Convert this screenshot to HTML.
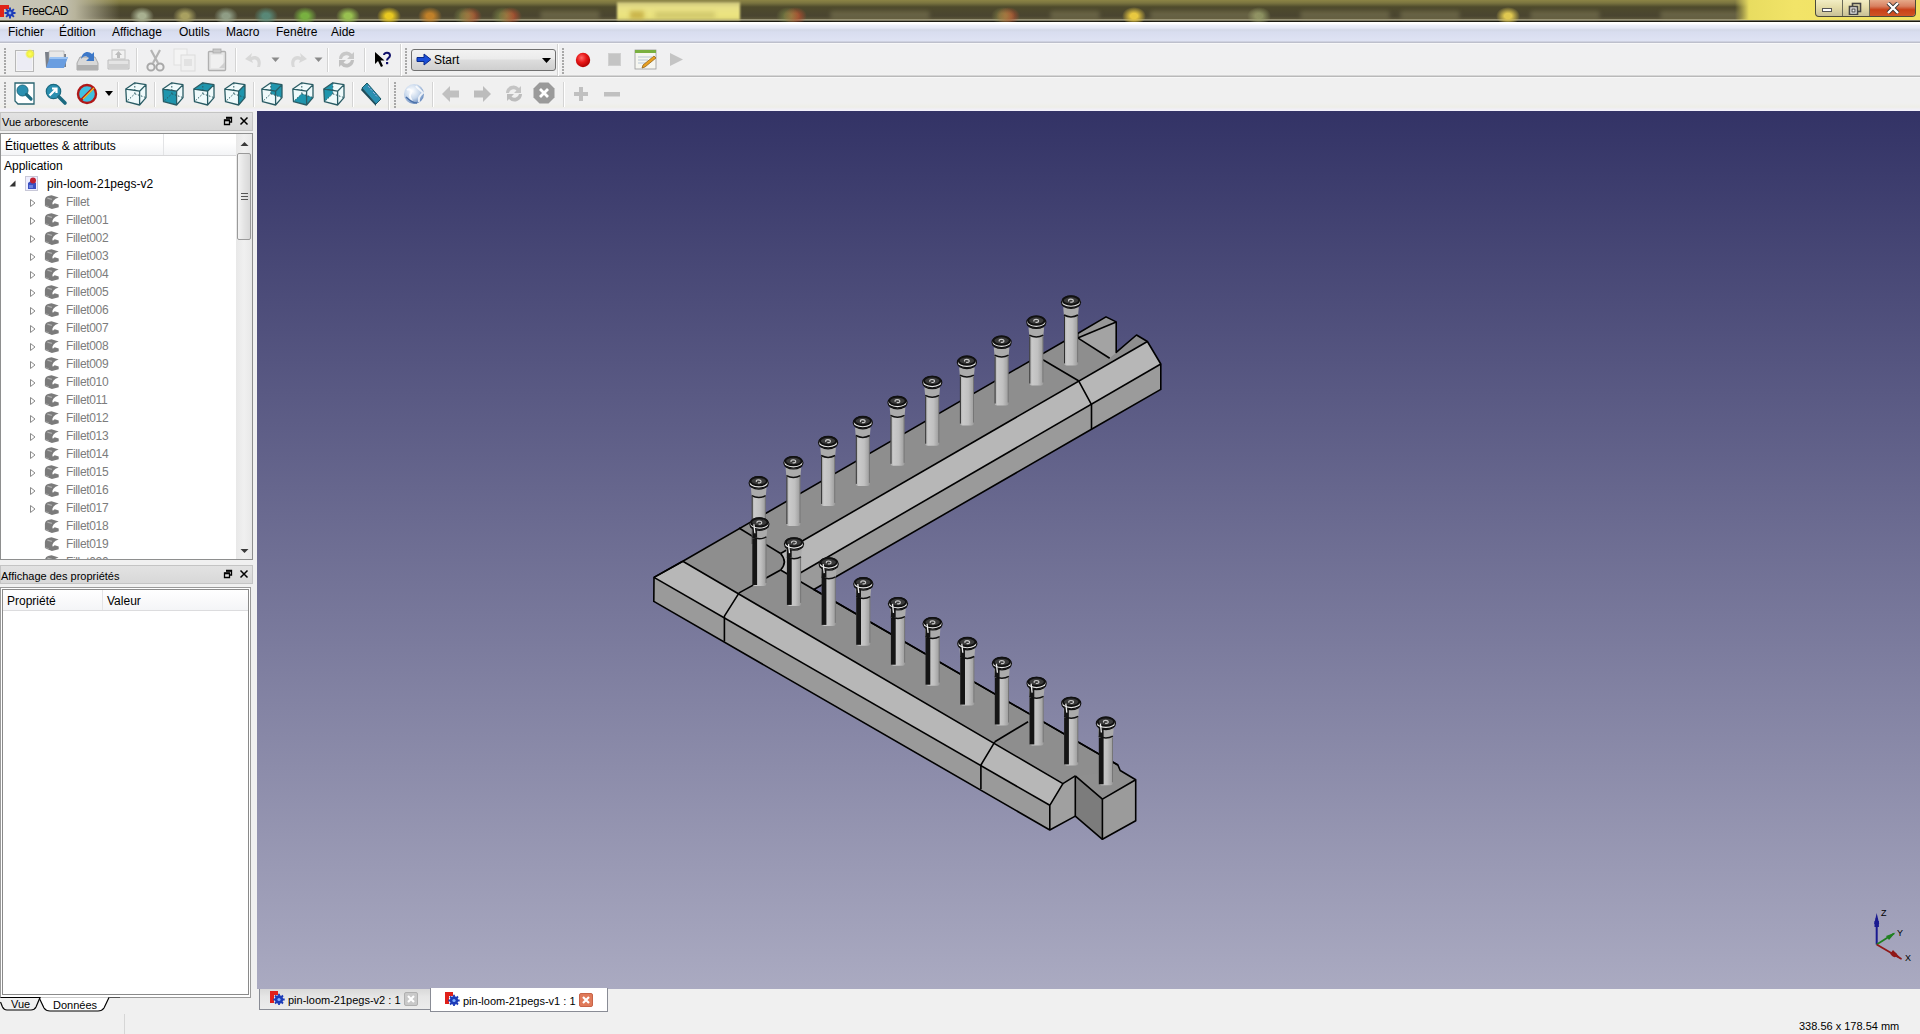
<!DOCTYPE html>
<html><head><meta charset="utf-8">
<style>
*{margin:0;padding:0;box-sizing:border-box}
html,body{width:1920px;height:1034px;overflow:hidden;background:#f0f0f0;font-family:"Liberation Sans",sans-serif;font-size:12px;color:#000;position:relative}
.a{position:absolute}
.t{position:absolute;white-space:nowrap;line-height:14px}
#title{left:0;top:0;width:1920px;height:22px;background:linear-gradient(#8c8445 0,#7a7440 3px,#4e4a2c 7px,#4a4530 16px,#5a5438 19px,#d8d4b8 20px,#1a1a10 21px)}
#menubar{left:0;top:22px;width:1920px;height:21px;background:linear-gradient(#fff 0,#fff 2px,#eef1fb 3px,#e4e8f5 6px,#d3d8e8 8px,#d8ddef 10px,#dfe3f4 19px,#bdbfcc 20px)}
#tb1{left:0;top:43px;width:1920px;height:34px;background:linear-gradient(#fff 0,#f0f0f2 1px,#f0f0f0 30px,#f2f2f2 32px,#b9b9b9 33px)}
#tb2{left:0;top:77px;width:1920px;height:34px;background:linear-gradient(#fff 0,#f0f0f0 1px,#f0f0f0 26px,#eeeee8 30px,#f2f0fa 33px)}
#view{left:257px;top:111px;width:1663px;height:878px;background:linear-gradient(#333366,#aaaac1)}
.hdr{background:linear-gradient(#e2e2e2,#d8d8d8);border:1px solid #c4c4c4}

</style></head><body>
<div id="title" class="a"></div>
<div class="a" style="left:0;top:0;width:130px;height:20px;background:linear-gradient(90deg,#c9c6b8 0,#c4c2b2 60px,#b8b49c 75px,rgba(120,115,80,0) 120px)"></div>
<div class="a" style="left:130px;top:7px;width:24px;height:18px;border-radius:50%;background:radial-gradient(closest-side,#a8b090 30%,rgba(0,0,0,0));opacity:1.00"></div>
<div class="a" style="left:173px;top:7px;width:24px;height:18px;border-radius:50%;background:radial-gradient(closest-side,#a8a060 30%,rgba(0,0,0,0));opacity:1.00"></div>
<div class="a" style="left:214px;top:7px;width:24px;height:18px;border-radius:50%;background:radial-gradient(closest-side,#98a890 30%,rgba(0,0,0,0));opacity:0.88"></div>
<div class="a" style="left:254px;top:7px;width:24px;height:18px;border-radius:50%;background:radial-gradient(closest-side,#5a9080 30%,rgba(0,0,0,0));opacity:0.88"></div>
<div class="a" style="left:293px;top:7px;width:24px;height:18px;border-radius:50%;background:radial-gradient(closest-side,#78b040 30%,rgba(0,0,0,0));opacity:1.00"></div>
<div class="a" style="left:336px;top:7px;width:24px;height:18px;border-radius:50%;background:radial-gradient(closest-side,#98c050 30%,rgba(0,0,0,0));opacity:1.00"></div>
<div class="a" style="left:377px;top:7px;width:24px;height:18px;border-radius:50%;background:radial-gradient(closest-side,#e8c820 30%,rgba(0,0,0,0));opacity:1.00"></div>
<div class="a" style="left:418px;top:7px;width:24px;height:18px;border-radius:50%;background:radial-gradient(closest-side,#d08828 30%,rgba(0,0,0,0));opacity:0.88"></div>
<div class="a" style="left:458px;top:7px;width:24px;height:18px;border-radius:50%;background:radial-gradient(closest-side,#c05030 30%,rgba(0,0,0,0));opacity:0.75"></div>
<div class="a" style="left:453px;top:7px;width:24px;height:18px;border-radius:50%;background:radial-gradient(closest-side,#90a050 30%,rgba(0,0,0,0));opacity:0.50"></div>
<div class="a" style="left:498px;top:7px;width:24px;height:18px;border-radius:50%;background:radial-gradient(closest-side,#c05030 30%,rgba(0,0,0,0));opacity:0.75"></div>
<div class="a" style="left:491px;top:7px;width:24px;height:18px;border-radius:50%;background:radial-gradient(closest-side,#90a050 30%,rgba(0,0,0,0));opacity:0.50"></div>
<div class="a" style="left:783px;top:7px;width:24px;height:18px;border-radius:50%;background:radial-gradient(closest-side,#c05030 30%,rgba(0,0,0,0));opacity:0.75"></div>
<div class="a" style="left:776px;top:7px;width:24px;height:18px;border-radius:50%;background:radial-gradient(closest-side,#90a050 30%,rgba(0,0,0,0));opacity:0.50"></div>
<div class="a" style="left:996px;top:7px;width:24px;height:18px;border-radius:50%;background:radial-gradient(closest-side,#c05030 30%,rgba(0,0,0,0));opacity:0.75"></div>
<div class="a" style="left:991px;top:7px;width:24px;height:18px;border-radius:50%;background:radial-gradient(closest-side,#a0a050 30%,rgba(0,0,0,0));opacity:0.50"></div>
<div class="a" style="left:1122px;top:7px;width:24px;height:18px;border-radius:50%;background:radial-gradient(closest-side,#e8c840 30%,rgba(0,0,0,0));opacity:1.00"></div>
<div class="a" style="left:1247px;top:7px;width:24px;height:18px;border-radius:50%;background:radial-gradient(closest-side,#a0a870 30%,rgba(0,0,0,0));opacity:0.75"></div>
<div class="a" style="left:1496px;top:7px;width:24px;height:18px;border-radius:50%;background:radial-gradient(closest-side,#e0c850 30%,rgba(0,0,0,0));opacity:1.00"></div>
<div class="a" style="left:540px;top:11px;width:60px;height:8px;border-radius:4px;background:rgba(160,155,110,0.35);filter:blur(2px)"></div>
<div class="a" style="left:830px;top:11px;width:100px;height:8px;border-radius:4px;background:rgba(160,155,110,0.35);filter:blur(2px)"></div>
<div class="a" style="left:1050px;top:11px;width:50px;height:8px;border-radius:4px;background:rgba(160,155,110,0.35);filter:blur(2px)"></div>
<div class="a" style="left:1150px;top:11px;width:110px;height:8px;border-radius:4px;background:rgba(160,155,110,0.35);filter:blur(2px)"></div>
<div class="a" style="left:1300px;top:11px;width:90px;height:8px;border-radius:4px;background:rgba(160,155,110,0.35);filter:blur(2px)"></div>
<div class="a" style="left:1400px;top:11px;width:60px;height:8px;border-radius:4px;background:rgba(160,155,110,0.35);filter:blur(2px)"></div>
<div class="a" style="left:1530px;top:11px;width:70px;height:8px;border-radius:4px;background:rgba(160,155,110,0.35);filter:blur(2px)"></div>
<div class="a" style="left:1660px;top:11px;width:80px;height:8px;border-radius:4px;background:rgba(160,155,110,0.35);filter:blur(2px)"></div>
<div class="a" style="left:617px;top:2px;width:123px;height:18px;background:linear-gradient(#c8c078,#e8e088 30%,#ece480 70%,#e0d878);filter:blur(1px)"></div>
<div class="a" style="left:630px;top:11px;width:14px;height:8px;background:rgba(180,150,40,0.6);filter:blur(2px)"></div>
<div class="a" style="left:655px;top:12px;width:60px;height:6px;background:rgba(170,160,80,0.4);filter:blur(2px)"></div>
<div class="a" style="left:1735px;top:0;width:185px;height:20px;background:linear-gradient(90deg,rgba(232,220,90,0) 0,#e8dc60 14px,#f2e468 60px,#f0e060 100%)"></div>

<svg class="a" style="left:0;top:4px" width="16" height="15" viewBox="0 0 16 15"><rect x="0" y="1" width="4" height="12" fill="#e02418"/><rect x="0" y="1" width="9" height="4" fill="#e02418"/><circle cx="10" cy="9" r="3.6" fill="#1d3cb8"/><g stroke="#1d3cb8" stroke-width="1.9"><path d="M10 3.5V14.5M4.5 9H15.5M6.1 5.1L13.9 12.9M13.9 5.1L6.1 12.9"/></g><circle cx="10" cy="9" r="1.4" fill="#8fb0e8"/></svg>
<div class="t" style="left:22px;top:4px;font-size:12px;color:#000;letter-spacing:-0.6px">FreeCAD</div>
<div class="a" style="left:1815px;top:-1px;width:101px;height:18px;border:1px solid #4a4a3a;border-top:none;border-radius:0 0 4px 4px;overflow:hidden;background:linear-gradient(#f4f0c8,#e4dca8 50%,#c8c098)"><div class="a" style="left:26px;top:0;width:1px;height:18px;background:#6a6a58"></div><div class="a" style="left:53px;top:0;width:1px;height:18px;background:#6a6a58"></div><div class="a" style="left:54px;top:0;width:47px;height:18px;background:linear-gradient(#e8b090,#d88060 40%,#c84018 60%,#d05828)"></div></div>
<div class="a" style="left:1822px;top:8px;width:10px;height:4px;background:#fff;border:1px solid #555"></div>
<svg class="a" style="left:1848px;top:2px" width="14" height="13" viewBox="0 0 14 13"><rect x="4.5" y="1.5" width="8" height="8" fill="none" stroke="#444" stroke-width="1.6"/><rect x="1.5" y="4.5" width="8" height="8" fill="#eee" stroke="#444" stroke-width="1.6"/><rect x="4" y="7" width="3" height="3" fill="none" stroke="#444"/></svg>
<svg class="a" style="left:1886px;top:2px" width="14" height="12" viewBox="0 0 14 12"><path d="M2 1 L12 11 M12 1 L2 11" stroke="#333" stroke-width="4"/><path d="M2 1 L12 11 M12 1 L2 11" stroke="#fff" stroke-width="2.4"/></svg><div id="menubar" class="a"></div>
<div class="t" style="left:8px;top:25px">Fichier</div>
<div class="t" style="left:59px;top:25px">Édition</div>
<div class="t" style="left:112px;top:25px">Affichage</div>
<div class="t" style="left:179px;top:25px">Outils</div>
<div class="t" style="left:226px;top:25px">Macro</div>
<div class="t" style="left:276px;top:25px">Fenêtre</div>
<div class="t" style="left:331px;top:25px">Aide</div>
<div id="tb1" class="a"></div><div id="tb2" class="a"></div>
<div class="a" style="left:4px;top:48px;width:2px;height:2px;background:#a8a8a8"></div><div class="a" style="left:4px;top:51px;width:2px;height:2px;background:#a8a8a8"></div><div class="a" style="left:4px;top:54px;width:2px;height:2px;background:#a8a8a8"></div><div class="a" style="left:4px;top:57px;width:2px;height:2px;background:#a8a8a8"></div><div class="a" style="left:4px;top:60px;width:2px;height:2px;background:#a8a8a8"></div><div class="a" style="left:4px;top:63px;width:2px;height:2px;background:#a8a8a8"></div><div class="a" style="left:4px;top:66px;width:2px;height:2px;background:#a8a8a8"></div><div class="a" style="left:4px;top:69px;width:2px;height:2px;background:#a8a8a8"></div><div class="a" style="left:4px;top:72px;width:2px;height:2px;background:#a8a8a8"></div>
<div class="a" style="left:4px;top:82px;width:2px;height:2px;background:#a8a8a8"></div><div class="a" style="left:4px;top:85px;width:2px;height:2px;background:#a8a8a8"></div><div class="a" style="left:4px;top:88px;width:2px;height:2px;background:#a8a8a8"></div><div class="a" style="left:4px;top:91px;width:2px;height:2px;background:#a8a8a8"></div><div class="a" style="left:4px;top:94px;width:2px;height:2px;background:#a8a8a8"></div><div class="a" style="left:4px;top:97px;width:2px;height:2px;background:#a8a8a8"></div><div class="a" style="left:4px;top:100px;width:2px;height:2px;background:#a8a8a8"></div><div class="a" style="left:4px;top:103px;width:2px;height:2px;background:#a8a8a8"></div><div class="a" style="left:4px;top:106px;width:2px;height:2px;background:#a8a8a8"></div>
<svg class="a" style="left:15px;top:49px" width="20" height="23" viewBox="0 0 20 23"><defs><radialGradient id="sun" cx="0.5" cy="0.5" r="0.5"><stop offset="0" stop-color="#ffff60"/><stop offset="0.6" stop-color="#f0f040"/><stop offset="1" stop-color="#f0f040" stop-opacity="0"/></radialGradient></defs><rect x="0.5" y="1.5" width="18" height="21" fill="#f4f4f4" stroke="#b8b8b8"/><rect x="2" y="3" width="15" height="18" fill="#ececf4"/><circle cx="15" cy="5" r="5" fill="url(#sun)"/></svg>
<svg class="a" style="left:44px;top:49px" width="25" height="20" viewBox="0 0 25 20"><path d="M1 3 L8 3 L10 5 L22 5 L22 18 L2 18Z" fill="#7a7f88"/><path d="M5 2 L20 2 L20 12 L5 12Z" fill="#e8e8e8" stroke="#aaa" stroke-width="0.6"/><path d="M2 19 L6 8 L24 8 L20 19Z" fill="#6a9ee0"/><path d="M6 8 L24 8 L23 10 L5.5 10Z" fill="#9cc4f4"/></svg>
<svg class="a" style="left:76px;top:49px" width="23" height="23" viewBox="0 0 23 23"><path d="M1 14 L4 8 L19 8 L22 14 L22 21 L1 21Z" fill="#d8d8d8" stroke="#9a9a9a" stroke-width="0.8"/><rect x="1" y="16" width="21" height="5" fill="#b0b0b0"/><path d="M5 10 C6 3 12 1 16 5 L18 3 L18 12 L10 12 L13 9 C10 6 7 7 5 10Z" fill="#3d78c8"/></svg>
<svg class="a" style="left:107px;top:49px" width="23" height="22" viewBox="0 0 23 22"><rect x="5" y="1" width="13" height="9" fill="#f2f2f2" stroke="#c4c4c4"/><path d="M11.5 2 L15 6 L13 6 L13 9 L10 9 L10 6 L8 6Z" fill="#bdbdbd"/><path d="M1 11 L22 11 L22 20 L1 20Z" fill="#e4e4e4" stroke="#bcbcbc"/><rect x="2" y="15" width="19" height="4" fill="#cfcfcf"/></svg>
<div class="a" style="left:136px;top:48px;width:1px;height:24px;background:#d4d4d4"></div><div class="a" style="left:137px;top:48px;width:1px;height:24px;background:#fff"></div>
<svg class="a" style="left:145px;top:48px" width="21" height="24" viewBox="0 0 21 24"><path d="M6 2 L13 15 M15 2 L8 15" stroke="#b4b4b4" stroke-width="2.2" fill="none"/><circle cx="6" cy="19" r="3.6" fill="none" stroke="#a8a8a8" stroke-width="2"/><circle cx="15" cy="19" r="3.6" fill="none" stroke="#a8a8a8" stroke-width="2"/></svg>
<svg class="a" style="left:173px;top:48px" width="24" height="24" viewBox="0 0 24 24"><rect x="1" y="1" width="13" height="16" fill="#f4f4f4" stroke="#e0e0e0"/><rect x="8" y="7" width="14" height="16" fill="#f0f0f0" stroke="#dcdcdc"/><rect x="11" y="11" width="8" height="7" fill="#e2e2e2"/></svg>
<svg class="a" style="left:207px;top:48px" width="21" height="24" viewBox="0 0 21 24"><rect x="1.5" y="3.5" width="17" height="19" rx="1" fill="#e6e6e6" stroke="#b0b0b0" stroke-width="1.4"/><rect x="6" y="1" width="8" height="4" fill="#c8c8c8" stroke="#aaa" stroke-width="0.8"/><rect x="4" y="7" width="12" height="13" fill="#f0f0f0"/><path d="M12 20 L18 14 L18 20Z" fill="#d0d0d0"/></svg>
<div class="a" style="left:235px;top:48px;width:1px;height:24px;background:#d4d4d4"></div><div class="a" style="left:236px;top:48px;width:1px;height:24px;background:#fff"></div>
<svg class="a" style="left:244px;top:50px" width="19" height="19" viewBox="0 0 19 19"><path d="M16 17 C19 9 13 4 7 7 L8 3 L1 9 L9 13 L8 10 C12 8 15 11 13 17Z" fill="#d8d8d8"/></svg>
<svg class="a" style="left:271px;top:57px" width="9" height="6" viewBox="0 0 9 6"><path d="M0.5 0.5 L8.5 0.5 L4.5 5Z" fill="#8a8a8a"/></svg>
<svg class="a" style="left:289px;top:50px" width="19" height="19" viewBox="0 0 19 19"><path d="M3 17 C0 9 6 4 12 7 L11 3 L18 9 L10 13 L11 10 C7 8 4 11 6 17Z" fill="#d8d8d8"/></svg>
<svg class="a" style="left:314px;top:57px" width="9" height="6" viewBox="0 0 9 6"><path d="M0.5 0.5 L8.5 0.5 L4.5 5Z" fill="#8a8a8a"/></svg>
<div class="a" style="left:327px;top:48px;width:1px;height:24px;background:#d4d4d4"></div><div class="a" style="left:328px;top:48px;width:1px;height:24px;background:#fff"></div>
<svg class="a" style="left:336px;top:49px" width="21" height="21" viewBox="0 0 21 21"><path d="M3 10 A7.5 7.5 0 0 1 16 5 L18 3 L18 10 L11 10 L13.5 7.5 A4.5 4.5 0 0 0 6 10Z" fill="#c8c8c8"/><path d="M18 11 A7.5 7.5 0 0 1 5 16 L3 18 L3 11 L10 11 L7.5 13.5 A4.5 4.5 0 0 0 15 11Z" fill="#c0c0c0"/></svg>
<div class="a" style="left:364px;top:48px;width:1px;height:24px;background:#d4d4d4"></div><div class="a" style="left:365px;top:48px;width:1px;height:24px;background:#fff"></div>
<svg class="a" style="left:374px;top:51px" width="18" height="18" viewBox="0 0 18 18"><path d="M1 1 L1 13 L4 10 L7 16 L9 15 L6.5 9.5 L10.5 9.5Z" fill="#000"/><path d="M10 4 C10 1 16 1 16 4.5 C16 7 13 7 13 9.5" fill="none" stroke="#10106a" stroke-width="2"/><rect x="12" y="11" width="2.2" height="2.2" fill="#10106a"/></svg>
<div class="a" style="left:400px;top:44px;width:1px;height:32px;background:#d4d4d4"></div><div class="a" style="left:401px;top:44px;width:1px;height:32px;background:#fff"></div>
<div class="a" style="left:405px;top:48px;width:2px;height:2px;background:#a8a8a8"></div><div class="a" style="left:405px;top:51px;width:2px;height:2px;background:#a8a8a8"></div><div class="a" style="left:405px;top:54px;width:2px;height:2px;background:#a8a8a8"></div><div class="a" style="left:405px;top:57px;width:2px;height:2px;background:#a8a8a8"></div><div class="a" style="left:405px;top:60px;width:2px;height:2px;background:#a8a8a8"></div><div class="a" style="left:405px;top:63px;width:2px;height:2px;background:#a8a8a8"></div><div class="a" style="left:405px;top:66px;width:2px;height:2px;background:#a8a8a8"></div><div class="a" style="left:405px;top:69px;width:2px;height:2px;background:#a8a8a8"></div><div class="a" style="left:405px;top:72px;width:2px;height:2px;background:#a8a8a8"></div>
<div class="a" style="left:411px;top:49px;width:145px;height:22px;border:1px solid #707070;border-radius:3px;background:linear-gradient(#f2f2f2,#ebebeb 45%,#dddddd 50%,#cfcfcf)"></div>
<svg class="a" style="left:416px;top:53px" width="16" height="13" viewBox="0 0 16 13"><path d="M1 4.5 L8 4.5 L8 1 L15 6.5 L8 12 L8 8.5 L1 8.5Z" fill="#1b4fd8" stroke="#0a2a8a" stroke-width="1"/></svg>
<div class="t" style="left:434px;top:53px">Start</div>
<svg class="a" style="left:542px;top:58px" width="9" height="5" viewBox="0 0 9 5"><path d="M0 0 L9 0 L4.5 5Z" fill="#000"/></svg>
<div class="a" style="left:557px;top:44px;width:1px;height:32px;background:#d4d4d4"></div><div class="a" style="left:558px;top:44px;width:1px;height:32px;background:#fff"></div>
<div class="a" style="left:562px;top:48px;width:2px;height:2px;background:#a8a8a8"></div><div class="a" style="left:562px;top:51px;width:2px;height:2px;background:#a8a8a8"></div><div class="a" style="left:562px;top:54px;width:2px;height:2px;background:#a8a8a8"></div><div class="a" style="left:562px;top:57px;width:2px;height:2px;background:#a8a8a8"></div><div class="a" style="left:562px;top:60px;width:2px;height:2px;background:#a8a8a8"></div><div class="a" style="left:562px;top:63px;width:2px;height:2px;background:#a8a8a8"></div><div class="a" style="left:562px;top:66px;width:2px;height:2px;background:#a8a8a8"></div><div class="a" style="left:562px;top:69px;width:2px;height:2px;background:#a8a8a8"></div><div class="a" style="left:562px;top:72px;width:2px;height:2px;background:#a8a8a8"></div>
<svg class="a" style="left:575px;top:52px" width="16" height="16" viewBox="0 0 16 16"><defs><radialGradient id="rec" cx="0.4" cy="0.35" r="0.65"><stop offset="0" stop-color="#ff6a6a"/><stop offset="0.5" stop-color="#e81818"/><stop offset="1" stop-color="#b00000"/></radialGradient></defs><circle cx="8" cy="8" r="7.2" fill="url(#rec)"/></svg>
<svg class="a" style="left:608px;top:53px" width="13" height="13" viewBox="0 0 13 13"><rect x="0.5" y="0.5" width="12" height="12" fill="#c4c4c4" stroke="#d0d0d0"/></svg>
<svg class="a" style="left:634px;top:48px" width="24" height="22" viewBox="0 0 24 22"><rect x="1" y="2" width="21" height="19" fill="#f6f6f0" stroke="#9a9a9a" stroke-width="0.8"/><rect x="1" y="2" width="21" height="3" fill="#7ab040"/><path d="M4 9H18M4 12H14M4 15H12" stroke="#b8c8d8" stroke-width="1"/><path d="M9 17 L20 8 L22 10 L11 19 L8 20Z" fill="#e8a020" stroke="#8a5a10" stroke-width="0.7"/></svg>
<svg class="a" style="left:669px;top:52px" width="15" height="15" viewBox="0 0 15 15"><path d="M1 1 L14 7.5 L1 14Z" fill="#c4c4c4"/></svg>
<svg class="a" style="left:14px;top:82px" width="22" height="24" viewBox="0 0 22 24"><path d="M1 1 L20 1 L20 22 L4 22 L1 19Z" fill="#fff" stroke="#2a6470" stroke-width="1.3"/><circle cx="8.5" cy="8.5" r="5.5" fill="#2a8fb0" stroke="#1b6a80" stroke-width="1"/><path d="M12.5 12.5 L17 17" stroke="#1b6a80" stroke-width="3.2" stroke-linecap="round"/></svg>
<svg class="a" style="left:45px;top:83px" width="23" height="23" viewBox="0 0 23 23"><circle cx="8.5" cy="8.5" r="7.2" fill="#2a8fb0" stroke="#1b6a80" stroke-width="1.2"/><path d="M4.5 12.5 L11 6 M7 5.5 L11.5 5.5 L11.5 10" stroke="#fff" stroke-width="2.2" fill="none"/><path d="M14 14 L20 20" stroke="#1b6a80" stroke-width="3.6" stroke-linecap="round"/></svg>
<svg class="a" style="left:76px;top:83px" width="23" height="22" viewBox="0 0 23 22"><circle cx="11" cy="11" r="9" fill="#40c0e0"/><circle cx="11" cy="11" r="9" fill="none" stroke="#b01818" stroke-width="2.4"/><path d="M4.5 17.5 L17.5 4.5" stroke="#b01818" stroke-width="2.4"/><path d="M7 16 L18 5" stroke="#f0c020" stroke-width="1.2"/></svg>
<svg class="a" style="left:105px;top:91px" width="8" height="5" viewBox="0 0 8 5"><path d="M0 0 L8 0 L4 5Z" fill="#000"/></svg>
<div class="a" style="left:117px;top:82px;width:1px;height:25px;background:#d4d4d4"></div><div class="a" style="left:118px;top:82px;width:1px;height:25px;background:#fff"></div>
<svg class="a" style="left:125px;top:82px" width="22" height="24" viewBox="0 0 22 24"><polygon points="0.8,7.0 9.8,0.8 21.0,2.6 21.0,15.6 14.6,23.0 1.5,19.6" fill="#effafb"/><path d="M0.8 7.0 L14.6 9.2 L14.6 23.0 L1.5 19.6 Z M14.6 9.2 L21.0 2.6 L21.0 15.6 L14.6 23.0 M0.8 7.0 L9.8 0.8 L21.0 2.6" fill="none" stroke="#2a5c64" stroke-width="1.3" stroke-linejoin="round"/><path d="M9.8 0.8 L9.8 11.8 L1.5 19.6 M9.8 11.8 L21.0 15.6" fill="none" stroke="#2a5c64" stroke-width="1" stroke-dasharray="1.6,1.6"/></svg>
<div class="a" style="left:154px;top:82px;width:1px;height:25px;background:#d4d4d4"></div><div class="a" style="left:155px;top:82px;width:1px;height:25px;background:#fff"></div>
<svg class="a" style="left:162px;top:82px" width="22" height="24" viewBox="0 0 22 24"><polygon points="0.8,7.0 9.8,0.8 21.0,2.6 21.0,15.6 14.6,23.0 1.5,19.6" fill="#effafb"/><polygon points="0.8,7.0 14.6,9.2 14.6,23.0 1.5,19.6" fill="#1f95ad"/><path d="M0.8 7.0 L14.6 9.2 L14.6 23.0 L1.5 19.6 Z M14.6 9.2 L21.0 2.6 L21.0 15.6 L14.6 23.0 M0.8 7.0 L9.8 0.8 L21.0 2.6" fill="none" stroke="#2a5c64" stroke-width="1.3" stroke-linejoin="round"/><path d="M9.8 0.8 L9.8 11.8 L1.5 19.6 M9.8 11.8 L21.0 15.6" fill="none" stroke="#2a5c64" stroke-width="1" stroke-dasharray="1.6,1.6"/></svg>
<svg class="a" style="left:193px;top:82px" width="22" height="24" viewBox="0 0 22 24"><polygon points="0.8,7.0 9.8,0.8 21.0,2.6 21.0,15.6 14.6,23.0 1.5,19.6" fill="#effafb"/><polygon points="0.8,7.0 9.8,0.8 21.0,2.6 14.6,9.2" fill="#1f95ad"/><path d="M0.8 7.0 L14.6 9.2 L14.6 23.0 L1.5 19.6 Z M14.6 9.2 L21.0 2.6 L21.0 15.6 L14.6 23.0 M0.8 7.0 L9.8 0.8 L21.0 2.6" fill="none" stroke="#2a5c64" stroke-width="1.3" stroke-linejoin="round"/><path d="M9.8 0.8 L9.8 11.8 L1.5 19.6 M9.8 11.8 L21.0 15.6" fill="none" stroke="#2a5c64" stroke-width="1" stroke-dasharray="1.6,1.6"/></svg>
<svg class="a" style="left:224px;top:82px" width="22" height="24" viewBox="0 0 22 24"><polygon points="0.8,7.0 9.8,0.8 21.0,2.6 21.0,15.6 14.6,23.0 1.5,19.6" fill="#effafb"/><polygon points="14.6,9.2 21.0,2.6 21.0,15.6 14.6,23.0" fill="#1f95ad"/><path d="M0.8 7.0 L14.6 9.2 L14.6 23.0 L1.5 19.6 Z M14.6 9.2 L21.0 2.6 L21.0 15.6 L14.6 23.0 M0.8 7.0 L9.8 0.8 L21.0 2.6" fill="none" stroke="#2a5c64" stroke-width="1.3" stroke-linejoin="round"/><path d="M9.8 0.8 L9.8 11.8 L1.5 19.6 M9.8 11.8 L21.0 15.6" fill="none" stroke="#2a5c64" stroke-width="1" stroke-dasharray="1.6,1.6"/></svg>
<div class="a" style="left:253px;top:82px;width:1px;height:25px;background:#d4d4d4"></div><div class="a" style="left:254px;top:82px;width:1px;height:25px;background:#fff"></div>
<svg class="a" style="left:261px;top:82px" width="22" height="24" viewBox="0 0 22 24"><polygon points="0.8,7.0 9.8,0.8 21.0,2.6 21.0,15.6 14.6,23.0 1.5,19.6" fill="#effafb"/><polygon points="9.8,0.8 21.0,2.6 21.0,15.6 9.8,11.8" fill="#1f95ad"/><path d="M0.8 7.0 L14.6 9.2 L14.6 23.0 L1.5 19.6 Z M14.6 9.2 L21.0 2.6 L21.0 15.6 L14.6 23.0 M0.8 7.0 L9.8 0.8 L21.0 2.6" fill="none" stroke="#2a5c64" stroke-width="1.3" stroke-linejoin="round"/><path d="M9.8 0.8 L9.8 11.8 L1.5 19.6 M9.8 11.8 L21.0 15.6" fill="none" stroke="#2a5c64" stroke-width="1" stroke-dasharray="1.6,1.6"/></svg>
<svg class="a" style="left:292px;top:82px" width="22" height="24" viewBox="0 0 22 24"><polygon points="0.8,7.0 9.8,0.8 21.0,2.6 21.0,15.6 14.6,23.0 1.5,19.6" fill="#effafb"/><polygon points="1.5,19.6 9.8,11.8 21.0,15.6 14.6,23.0" fill="#1f95ad"/><path d="M0.8 7.0 L14.6 9.2 L14.6 23.0 L1.5 19.6 Z M14.6 9.2 L21.0 2.6 L21.0 15.6 L14.6 23.0 M0.8 7.0 L9.8 0.8 L21.0 2.6" fill="none" stroke="#2a5c64" stroke-width="1.3" stroke-linejoin="round"/><path d="M9.8 0.8 L9.8 11.8 L1.5 19.6 M9.8 11.8 L21.0 15.6" fill="none" stroke="#2a5c64" stroke-width="1" stroke-dasharray="1.6,1.6"/></svg>
<svg class="a" style="left:323px;top:82px" width="22" height="24" viewBox="0 0 22 24"><polygon points="0.8,7.0 9.8,0.8 21.0,2.6 21.0,15.6 14.6,23.0 1.5,19.6" fill="#effafb"/><polygon points="0.8,7.0 9.8,0.8 9.8,11.8 1.5,19.6" fill="#1f95ad"/><path d="M0.8 7.0 L14.6 9.2 L14.6 23.0 L1.5 19.6 Z M14.6 9.2 L21.0 2.6 L21.0 15.6 L14.6 23.0 M0.8 7.0 L9.8 0.8 L21.0 2.6" fill="none" stroke="#2a5c64" stroke-width="1.3" stroke-linejoin="round"/><path d="M9.8 0.8 L9.8 11.8 L1.5 19.6 M9.8 11.8 L21.0 15.6" fill="none" stroke="#2a5c64" stroke-width="1" stroke-dasharray="1.6,1.6"/></svg>
<div class="a" style="left:352px;top:82px;width:1px;height:25px;background:#d4d4d4"></div><div class="a" style="left:353px;top:82px;width:1px;height:25px;background:#fff"></div>
<svg class="a" style="left:360px;top:82px" width="22" height="24" viewBox="0 0 22 24"><path d="M2 6 L7 1 L21 17 L16 22Z" fill="#2a8fb0" stroke="#1b5a68" stroke-width="1"/><path d="M2 6 L16 22 L16 24 L1 8Z" fill="#1b4a58"/><path d="M8 4 L10 6 M10.5 7 L12 8.5 M13 10 L15 12 M15.5 13 L17 14.5" stroke="#9ad" stroke-width="1"/></svg>
<div class="a" style="left:388px;top:78px;width:1px;height:32px;background:#d4d4d4"></div><div class="a" style="left:389px;top:78px;width:1px;height:32px;background:#fff"></div>
<div class="a" style="left:394px;top:82px;width:2px;height:2px;background:#a8a8a8"></div><div class="a" style="left:394px;top:85px;width:2px;height:2px;background:#a8a8a8"></div><div class="a" style="left:394px;top:88px;width:2px;height:2px;background:#a8a8a8"></div><div class="a" style="left:394px;top:91px;width:2px;height:2px;background:#a8a8a8"></div><div class="a" style="left:394px;top:94px;width:2px;height:2px;background:#a8a8a8"></div><div class="a" style="left:394px;top:97px;width:2px;height:2px;background:#a8a8a8"></div><div class="a" style="left:394px;top:100px;width:2px;height:2px;background:#a8a8a8"></div><div class="a" style="left:394px;top:103px;width:2px;height:2px;background:#a8a8a8"></div><div class="a" style="left:394px;top:106px;width:2px;height:2px;background:#a8a8a8"></div>
<svg class="a" style="left:403px;top:83px" width="22" height="22" viewBox="0 0 22 22"><defs><radialGradient id="glb" cx="0.4" cy="0.35" r="0.7"><stop offset="0" stop-color="#ffffff"/><stop offset="0.55" stop-color="#c8d8ec"/><stop offset="1" stop-color="#5a80b8"/></radialGradient></defs><circle cx="11" cy="11" r="10" fill="url(#glb)"/><path d="M4 7 C7 5 9 8 8 10 C6 12 7 15 9 18 M13 3 C15 6 18 7 20 10 C17 12 15 14 16 19" stroke="#fff" stroke-width="2" fill="none" opacity="0.8"/><path d="M3 14 C6 17 9 20 14 20" stroke="#4a70a8" stroke-width="1.5" fill="none"/></svg>
<div class="a" style="left:432px;top:82px;width:1px;height:25px;background:#d4d4d4"></div><div class="a" style="left:433px;top:82px;width:1px;height:25px;background:#fff"></div>
<svg class="a" style="left:441px;top:85px" width="19" height="18" viewBox="0 0 19 18"><path d="M1 9 L9 1 L9 5.5 L18 5.5 L18 12.5 L9 12.5 L9 17Z" fill="#c0c0c0"/></svg>
<svg class="a" style="left:473px;top:85px" width="19" height="18" viewBox="0 0 19 18"><path d="M18 9 L10 1 L10 5.5 L1 5.5 L1 12.5 L10 12.5 L10 17Z" fill="#bcbcbc"/></svg>
<svg class="a" style="left:504px;top:83px" width="20" height="21" viewBox="0 0 20 21"><path d="M2 10 A7.5 7.5 0 0 1 15 5 L17 3 L17 10 L10 10 L12.5 7.5 A4.5 4.5 0 0 0 5 10Z" fill="#c4c4c4"/><path d="M18 11 A7.5 7.5 0 0 1 5 16 L3 18 L3 11 L10 11 L7.5 13.5 A4.5 4.5 0 0 0 15 11Z" fill="#bcbcbc"/></svg>
<svg class="a" style="left:533px;top:82px" width="22" height="22" viewBox="0 0 22 22"><path d="M6.5 0.5 L15.5 0.5 L21.5 6.5 L21.5 15.5 L15.5 21.5 L6.5 21.5 L0.5 15.5 L0.5 6.5Z" fill="#9a9a9a"/><path d="M7 7 L15 15 M15 7 L7 15" stroke="#fff" stroke-width="2.8"/></svg>
<div class="a" style="left:563px;top:82px;width:1px;height:25px;background:#d4d4d4"></div><div class="a" style="left:564px;top:82px;width:1px;height:25px;background:#fff"></div>
<svg class="a" style="left:574px;top:87px" width="14" height="14" viewBox="0 0 14 14"><path d="M5 0 H9 V5 H14 V9 H9 V14 H5 V9 H0 V5 H5Z" fill="#c0c0c0"/></svg>
<svg class="a" style="left:604px;top:92px" width="16" height="5" viewBox="0 0 16 5"><rect x="0" y="0" width="16" height="4.5" fill="#c0c0c0"/></svg>
<!-- tree dock -->
<div class="a hdr" style="left:0;top:112px;width:253px;height:19px"></div>
<div class="t" style="left:2px;top:115px;font-size:11px">Vue arborescente</div>
<svg class="a" style="left:223px;top:116px" width="10" height="10" viewBox="0 0 10 10"><path d="M3 1.5H8.5V6H7M1.5 4H6.5V8.5H1.5Z" fill="none" stroke="#000" stroke-width="1.3"/><path d="M1.5 4.5H6.5" stroke="#000" stroke-width="1.6"/><path d="M3 2H8.5" stroke="#000" stroke-width="1.6"/></svg>
<svg class="a" style="left:239px;top:116px" width="10" height="10" viewBox="0 0 10 10"><path d="M1.5 1.5L8.5 8.5M8.5 1.5L1.5 8.5" stroke="#000" stroke-width="1.5"/></svg>
<div class="a" style="left:0;top:133px;width:253px;height:427px;border:1px solid #8e8f8f;background:#fff;overflow:hidden">
  <div class="a" style="left:0;top:0;width:235px;height:22px;background:linear-gradient(#fff 0,#fff 40%,#f3f4f6 100%);border-bottom:1px solid #d8d8da"></div>
  <div class="a" style="left:162px;top:0;width:1px;height:21px;background:#e3e4e6"></div>
  <div class="t" style="left:4px;top:5px">Étiquettes &amp; attributs</div>
  <div class="a" style="left:0;top:0;width:251px;height:425px">
  <div class="a" style="left:-1px;top:-133px;width:300px;height:1000px">
<div class="t" style="left:4px;top:156px;line-height:18px">Application</div>
<svg class="a" style="left:9px;top:179px" width="7" height="7" viewBox="0 0 7 7"><path d="M6.5 0.5 L6.5 6.5 L0.5 6.5Z" fill="#333"/></svg>
<svg class="a" style="left:25px;top:175px" width="14" height="15" viewBox="0 0 14 15"><rect x="0.5" y="0.5" width="12" height="14" fill="#eef" stroke="#c8c8d8"/><path d="M3 7 L7 4 L11 7 L11 13 L3 13Z" fill="#3a4fc0"/><circle cx="8" cy="4.5" r="3" fill="#c02030"/><rect x="4" y="9" width="4" height="3" fill="#6a80e0"/></svg>
<div class="t" style="left:47px;top:174px;line-height:18px">pin-loom-21pegs-v2</div>
<svg class="a" style="left:29px;top:197px" width="8" height="10" viewBox="0 0 8 10"><path d="M1.5 1.5 L6 5 L1.5 8.5Z" fill="none" stroke="#8a8a8a" stroke-width="1"/></svg>
<svg class="a" style="left:44px;top:192px" width="16" height="17" viewBox="0 0 16 17"><path d="M0.9 7 Q1.5 3.5 4.1 3.1 L7.5 2.3 L14.7 4.4 Q11 5.5 9.6 7.4 L8.3 9.9 L8.8 11.8 L10.7 10.3 L14.7 11.6 L14.7 14.2 L7.9 15.9 L4.1 14.4 L0.9 12.9Z" fill="#7b7b7b"/><path d="M3.4 5.2 L7.9 6.3" stroke="#b0b0b0" stroke-width="1.2"/><path d="M1.5 12.5 L5 13.8" stroke="#a0a0a0" stroke-width="1"/></svg>
<div class="t" style="left:66px;top:192px;line-height:18px;color:#7c7c7c;letter-spacing:-0.35px">Fillet</div>
<svg class="a" style="left:29px;top:215px" width="8" height="10" viewBox="0 0 8 10"><path d="M1.5 1.5 L6 5 L1.5 8.5Z" fill="none" stroke="#8a8a8a" stroke-width="1"/></svg>
<svg class="a" style="left:44px;top:210px" width="16" height="17" viewBox="0 0 16 17"><path d="M0.9 7 Q1.5 3.5 4.1 3.1 L7.5 2.3 L14.7 4.4 Q11 5.5 9.6 7.4 L8.3 9.9 L8.8 11.8 L10.7 10.3 L14.7 11.6 L14.7 14.2 L7.9 15.9 L4.1 14.4 L0.9 12.9Z" fill="#7b7b7b"/><path d="M3.4 5.2 L7.9 6.3" stroke="#b0b0b0" stroke-width="1.2"/><path d="M1.5 12.5 L5 13.8" stroke="#a0a0a0" stroke-width="1"/></svg>
<div class="t" style="left:66px;top:210px;line-height:18px;color:#7c7c7c;letter-spacing:-0.35px">Fillet001</div>
<svg class="a" style="left:29px;top:233px" width="8" height="10" viewBox="0 0 8 10"><path d="M1.5 1.5 L6 5 L1.5 8.5Z" fill="none" stroke="#8a8a8a" stroke-width="1"/></svg>
<svg class="a" style="left:44px;top:228px" width="16" height="17" viewBox="0 0 16 17"><path d="M0.9 7 Q1.5 3.5 4.1 3.1 L7.5 2.3 L14.7 4.4 Q11 5.5 9.6 7.4 L8.3 9.9 L8.8 11.8 L10.7 10.3 L14.7 11.6 L14.7 14.2 L7.9 15.9 L4.1 14.4 L0.9 12.9Z" fill="#7b7b7b"/><path d="M3.4 5.2 L7.9 6.3" stroke="#b0b0b0" stroke-width="1.2"/><path d="M1.5 12.5 L5 13.8" stroke="#a0a0a0" stroke-width="1"/></svg>
<div class="t" style="left:66px;top:228px;line-height:18px;color:#7c7c7c;letter-spacing:-0.35px">Fillet002</div>
<svg class="a" style="left:29px;top:251px" width="8" height="10" viewBox="0 0 8 10"><path d="M1.5 1.5 L6 5 L1.5 8.5Z" fill="none" stroke="#8a8a8a" stroke-width="1"/></svg>
<svg class="a" style="left:44px;top:246px" width="16" height="17" viewBox="0 0 16 17"><path d="M0.9 7 Q1.5 3.5 4.1 3.1 L7.5 2.3 L14.7 4.4 Q11 5.5 9.6 7.4 L8.3 9.9 L8.8 11.8 L10.7 10.3 L14.7 11.6 L14.7 14.2 L7.9 15.9 L4.1 14.4 L0.9 12.9Z" fill="#7b7b7b"/><path d="M3.4 5.2 L7.9 6.3" stroke="#b0b0b0" stroke-width="1.2"/><path d="M1.5 12.5 L5 13.8" stroke="#a0a0a0" stroke-width="1"/></svg>
<div class="t" style="left:66px;top:246px;line-height:18px;color:#7c7c7c;letter-spacing:-0.35px">Fillet003</div>
<svg class="a" style="left:29px;top:269px" width="8" height="10" viewBox="0 0 8 10"><path d="M1.5 1.5 L6 5 L1.5 8.5Z" fill="none" stroke="#8a8a8a" stroke-width="1"/></svg>
<svg class="a" style="left:44px;top:264px" width="16" height="17" viewBox="0 0 16 17"><path d="M0.9 7 Q1.5 3.5 4.1 3.1 L7.5 2.3 L14.7 4.4 Q11 5.5 9.6 7.4 L8.3 9.9 L8.8 11.8 L10.7 10.3 L14.7 11.6 L14.7 14.2 L7.9 15.9 L4.1 14.4 L0.9 12.9Z" fill="#7b7b7b"/><path d="M3.4 5.2 L7.9 6.3" stroke="#b0b0b0" stroke-width="1.2"/><path d="M1.5 12.5 L5 13.8" stroke="#a0a0a0" stroke-width="1"/></svg>
<div class="t" style="left:66px;top:264px;line-height:18px;color:#7c7c7c;letter-spacing:-0.35px">Fillet004</div>
<svg class="a" style="left:29px;top:287px" width="8" height="10" viewBox="0 0 8 10"><path d="M1.5 1.5 L6 5 L1.5 8.5Z" fill="none" stroke="#8a8a8a" stroke-width="1"/></svg>
<svg class="a" style="left:44px;top:282px" width="16" height="17" viewBox="0 0 16 17"><path d="M0.9 7 Q1.5 3.5 4.1 3.1 L7.5 2.3 L14.7 4.4 Q11 5.5 9.6 7.4 L8.3 9.9 L8.8 11.8 L10.7 10.3 L14.7 11.6 L14.7 14.2 L7.9 15.9 L4.1 14.4 L0.9 12.9Z" fill="#7b7b7b"/><path d="M3.4 5.2 L7.9 6.3" stroke="#b0b0b0" stroke-width="1.2"/><path d="M1.5 12.5 L5 13.8" stroke="#a0a0a0" stroke-width="1"/></svg>
<div class="t" style="left:66px;top:282px;line-height:18px;color:#7c7c7c;letter-spacing:-0.35px">Fillet005</div>
<svg class="a" style="left:29px;top:305px" width="8" height="10" viewBox="0 0 8 10"><path d="M1.5 1.5 L6 5 L1.5 8.5Z" fill="none" stroke="#8a8a8a" stroke-width="1"/></svg>
<svg class="a" style="left:44px;top:300px" width="16" height="17" viewBox="0 0 16 17"><path d="M0.9 7 Q1.5 3.5 4.1 3.1 L7.5 2.3 L14.7 4.4 Q11 5.5 9.6 7.4 L8.3 9.9 L8.8 11.8 L10.7 10.3 L14.7 11.6 L14.7 14.2 L7.9 15.9 L4.1 14.4 L0.9 12.9Z" fill="#7b7b7b"/><path d="M3.4 5.2 L7.9 6.3" stroke="#b0b0b0" stroke-width="1.2"/><path d="M1.5 12.5 L5 13.8" stroke="#a0a0a0" stroke-width="1"/></svg>
<div class="t" style="left:66px;top:300px;line-height:18px;color:#7c7c7c;letter-spacing:-0.35px">Fillet006</div>
<svg class="a" style="left:29px;top:323px" width="8" height="10" viewBox="0 0 8 10"><path d="M1.5 1.5 L6 5 L1.5 8.5Z" fill="none" stroke="#8a8a8a" stroke-width="1"/></svg>
<svg class="a" style="left:44px;top:318px" width="16" height="17" viewBox="0 0 16 17"><path d="M0.9 7 Q1.5 3.5 4.1 3.1 L7.5 2.3 L14.7 4.4 Q11 5.5 9.6 7.4 L8.3 9.9 L8.8 11.8 L10.7 10.3 L14.7 11.6 L14.7 14.2 L7.9 15.9 L4.1 14.4 L0.9 12.9Z" fill="#7b7b7b"/><path d="M3.4 5.2 L7.9 6.3" stroke="#b0b0b0" stroke-width="1.2"/><path d="M1.5 12.5 L5 13.8" stroke="#a0a0a0" stroke-width="1"/></svg>
<div class="t" style="left:66px;top:318px;line-height:18px;color:#7c7c7c;letter-spacing:-0.35px">Fillet007</div>
<svg class="a" style="left:29px;top:341px" width="8" height="10" viewBox="0 0 8 10"><path d="M1.5 1.5 L6 5 L1.5 8.5Z" fill="none" stroke="#8a8a8a" stroke-width="1"/></svg>
<svg class="a" style="left:44px;top:336px" width="16" height="17" viewBox="0 0 16 17"><path d="M0.9 7 Q1.5 3.5 4.1 3.1 L7.5 2.3 L14.7 4.4 Q11 5.5 9.6 7.4 L8.3 9.9 L8.8 11.8 L10.7 10.3 L14.7 11.6 L14.7 14.2 L7.9 15.9 L4.1 14.4 L0.9 12.9Z" fill="#7b7b7b"/><path d="M3.4 5.2 L7.9 6.3" stroke="#b0b0b0" stroke-width="1.2"/><path d="M1.5 12.5 L5 13.8" stroke="#a0a0a0" stroke-width="1"/></svg>
<div class="t" style="left:66px;top:336px;line-height:18px;color:#7c7c7c;letter-spacing:-0.35px">Fillet008</div>
<svg class="a" style="left:29px;top:359px" width="8" height="10" viewBox="0 0 8 10"><path d="M1.5 1.5 L6 5 L1.5 8.5Z" fill="none" stroke="#8a8a8a" stroke-width="1"/></svg>
<svg class="a" style="left:44px;top:354px" width="16" height="17" viewBox="0 0 16 17"><path d="M0.9 7 Q1.5 3.5 4.1 3.1 L7.5 2.3 L14.7 4.4 Q11 5.5 9.6 7.4 L8.3 9.9 L8.8 11.8 L10.7 10.3 L14.7 11.6 L14.7 14.2 L7.9 15.9 L4.1 14.4 L0.9 12.9Z" fill="#7b7b7b"/><path d="M3.4 5.2 L7.9 6.3" stroke="#b0b0b0" stroke-width="1.2"/><path d="M1.5 12.5 L5 13.8" stroke="#a0a0a0" stroke-width="1"/></svg>
<div class="t" style="left:66px;top:354px;line-height:18px;color:#7c7c7c;letter-spacing:-0.35px">Fillet009</div>
<svg class="a" style="left:29px;top:377px" width="8" height="10" viewBox="0 0 8 10"><path d="M1.5 1.5 L6 5 L1.5 8.5Z" fill="none" stroke="#8a8a8a" stroke-width="1"/></svg>
<svg class="a" style="left:44px;top:372px" width="16" height="17" viewBox="0 0 16 17"><path d="M0.9 7 Q1.5 3.5 4.1 3.1 L7.5 2.3 L14.7 4.4 Q11 5.5 9.6 7.4 L8.3 9.9 L8.8 11.8 L10.7 10.3 L14.7 11.6 L14.7 14.2 L7.9 15.9 L4.1 14.4 L0.9 12.9Z" fill="#7b7b7b"/><path d="M3.4 5.2 L7.9 6.3" stroke="#b0b0b0" stroke-width="1.2"/><path d="M1.5 12.5 L5 13.8" stroke="#a0a0a0" stroke-width="1"/></svg>
<div class="t" style="left:66px;top:372px;line-height:18px;color:#7c7c7c;letter-spacing:-0.35px">Fillet010</div>
<svg class="a" style="left:29px;top:395px" width="8" height="10" viewBox="0 0 8 10"><path d="M1.5 1.5 L6 5 L1.5 8.5Z" fill="none" stroke="#8a8a8a" stroke-width="1"/></svg>
<svg class="a" style="left:44px;top:390px" width="16" height="17" viewBox="0 0 16 17"><path d="M0.9 7 Q1.5 3.5 4.1 3.1 L7.5 2.3 L14.7 4.4 Q11 5.5 9.6 7.4 L8.3 9.9 L8.8 11.8 L10.7 10.3 L14.7 11.6 L14.7 14.2 L7.9 15.9 L4.1 14.4 L0.9 12.9Z" fill="#7b7b7b"/><path d="M3.4 5.2 L7.9 6.3" stroke="#b0b0b0" stroke-width="1.2"/><path d="M1.5 12.5 L5 13.8" stroke="#a0a0a0" stroke-width="1"/></svg>
<div class="t" style="left:66px;top:390px;line-height:18px;color:#7c7c7c;letter-spacing:-0.35px">Fillet011</div>
<svg class="a" style="left:29px;top:413px" width="8" height="10" viewBox="0 0 8 10"><path d="M1.5 1.5 L6 5 L1.5 8.5Z" fill="none" stroke="#8a8a8a" stroke-width="1"/></svg>
<svg class="a" style="left:44px;top:408px" width="16" height="17" viewBox="0 0 16 17"><path d="M0.9 7 Q1.5 3.5 4.1 3.1 L7.5 2.3 L14.7 4.4 Q11 5.5 9.6 7.4 L8.3 9.9 L8.8 11.8 L10.7 10.3 L14.7 11.6 L14.7 14.2 L7.9 15.9 L4.1 14.4 L0.9 12.9Z" fill="#7b7b7b"/><path d="M3.4 5.2 L7.9 6.3" stroke="#b0b0b0" stroke-width="1.2"/><path d="M1.5 12.5 L5 13.8" stroke="#a0a0a0" stroke-width="1"/></svg>
<div class="t" style="left:66px;top:408px;line-height:18px;color:#7c7c7c;letter-spacing:-0.35px">Fillet012</div>
<svg class="a" style="left:29px;top:431px" width="8" height="10" viewBox="0 0 8 10"><path d="M1.5 1.5 L6 5 L1.5 8.5Z" fill="none" stroke="#8a8a8a" stroke-width="1"/></svg>
<svg class="a" style="left:44px;top:426px" width="16" height="17" viewBox="0 0 16 17"><path d="M0.9 7 Q1.5 3.5 4.1 3.1 L7.5 2.3 L14.7 4.4 Q11 5.5 9.6 7.4 L8.3 9.9 L8.8 11.8 L10.7 10.3 L14.7 11.6 L14.7 14.2 L7.9 15.9 L4.1 14.4 L0.9 12.9Z" fill="#7b7b7b"/><path d="M3.4 5.2 L7.9 6.3" stroke="#b0b0b0" stroke-width="1.2"/><path d="M1.5 12.5 L5 13.8" stroke="#a0a0a0" stroke-width="1"/></svg>
<div class="t" style="left:66px;top:426px;line-height:18px;color:#7c7c7c;letter-spacing:-0.35px">Fillet013</div>
<svg class="a" style="left:29px;top:449px" width="8" height="10" viewBox="0 0 8 10"><path d="M1.5 1.5 L6 5 L1.5 8.5Z" fill="none" stroke="#8a8a8a" stroke-width="1"/></svg>
<svg class="a" style="left:44px;top:444px" width="16" height="17" viewBox="0 0 16 17"><path d="M0.9 7 Q1.5 3.5 4.1 3.1 L7.5 2.3 L14.7 4.4 Q11 5.5 9.6 7.4 L8.3 9.9 L8.8 11.8 L10.7 10.3 L14.7 11.6 L14.7 14.2 L7.9 15.9 L4.1 14.4 L0.9 12.9Z" fill="#7b7b7b"/><path d="M3.4 5.2 L7.9 6.3" stroke="#b0b0b0" stroke-width="1.2"/><path d="M1.5 12.5 L5 13.8" stroke="#a0a0a0" stroke-width="1"/></svg>
<div class="t" style="left:66px;top:444px;line-height:18px;color:#7c7c7c;letter-spacing:-0.35px">Fillet014</div>
<svg class="a" style="left:29px;top:467px" width="8" height="10" viewBox="0 0 8 10"><path d="M1.5 1.5 L6 5 L1.5 8.5Z" fill="none" stroke="#8a8a8a" stroke-width="1"/></svg>
<svg class="a" style="left:44px;top:462px" width="16" height="17" viewBox="0 0 16 17"><path d="M0.9 7 Q1.5 3.5 4.1 3.1 L7.5 2.3 L14.7 4.4 Q11 5.5 9.6 7.4 L8.3 9.9 L8.8 11.8 L10.7 10.3 L14.7 11.6 L14.7 14.2 L7.9 15.9 L4.1 14.4 L0.9 12.9Z" fill="#7b7b7b"/><path d="M3.4 5.2 L7.9 6.3" stroke="#b0b0b0" stroke-width="1.2"/><path d="M1.5 12.5 L5 13.8" stroke="#a0a0a0" stroke-width="1"/></svg>
<div class="t" style="left:66px;top:462px;line-height:18px;color:#7c7c7c;letter-spacing:-0.35px">Fillet015</div>
<svg class="a" style="left:29px;top:485px" width="8" height="10" viewBox="0 0 8 10"><path d="M1.5 1.5 L6 5 L1.5 8.5Z" fill="none" stroke="#8a8a8a" stroke-width="1"/></svg>
<svg class="a" style="left:44px;top:480px" width="16" height="17" viewBox="0 0 16 17"><path d="M0.9 7 Q1.5 3.5 4.1 3.1 L7.5 2.3 L14.7 4.4 Q11 5.5 9.6 7.4 L8.3 9.9 L8.8 11.8 L10.7 10.3 L14.7 11.6 L14.7 14.2 L7.9 15.9 L4.1 14.4 L0.9 12.9Z" fill="#7b7b7b"/><path d="M3.4 5.2 L7.9 6.3" stroke="#b0b0b0" stroke-width="1.2"/><path d="M1.5 12.5 L5 13.8" stroke="#a0a0a0" stroke-width="1"/></svg>
<div class="t" style="left:66px;top:480px;line-height:18px;color:#7c7c7c;letter-spacing:-0.35px">Fillet016</div>
<svg class="a" style="left:29px;top:503px" width="8" height="10" viewBox="0 0 8 10"><path d="M1.5 1.5 L6 5 L1.5 8.5Z" fill="none" stroke="#8a8a8a" stroke-width="1"/></svg>
<svg class="a" style="left:44px;top:498px" width="16" height="17" viewBox="0 0 16 17"><path d="M0.9 7 Q1.5 3.5 4.1 3.1 L7.5 2.3 L14.7 4.4 Q11 5.5 9.6 7.4 L8.3 9.9 L8.8 11.8 L10.7 10.3 L14.7 11.6 L14.7 14.2 L7.9 15.9 L4.1 14.4 L0.9 12.9Z" fill="#7b7b7b"/><path d="M3.4 5.2 L7.9 6.3" stroke="#b0b0b0" stroke-width="1.2"/><path d="M1.5 12.5 L5 13.8" stroke="#a0a0a0" stroke-width="1"/></svg>
<div class="t" style="left:66px;top:498px;line-height:18px;color:#7c7c7c;letter-spacing:-0.35px">Fillet017</div>
<svg class="a" style="left:44px;top:516px" width="16" height="17" viewBox="0 0 16 17"><path d="M0.9 7 Q1.5 3.5 4.1 3.1 L7.5 2.3 L14.7 4.4 Q11 5.5 9.6 7.4 L8.3 9.9 L8.8 11.8 L10.7 10.3 L14.7 11.6 L14.7 14.2 L7.9 15.9 L4.1 14.4 L0.9 12.9Z" fill="#7b7b7b"/><path d="M3.4 5.2 L7.9 6.3" stroke="#b0b0b0" stroke-width="1.2"/><path d="M1.5 12.5 L5 13.8" stroke="#a0a0a0" stroke-width="1"/></svg>
<div class="t" style="left:66px;top:516px;line-height:18px;color:#7c7c7c;letter-spacing:-0.35px">Fillet018</div>
<svg class="a" style="left:44px;top:534px" width="16" height="17" viewBox="0 0 16 17"><path d="M0.9 7 Q1.5 3.5 4.1 3.1 L7.5 2.3 L14.7 4.4 Q11 5.5 9.6 7.4 L8.3 9.9 L8.8 11.8 L10.7 10.3 L14.7 11.6 L14.7 14.2 L7.9 15.9 L4.1 14.4 L0.9 12.9Z" fill="#7b7b7b"/><path d="M3.4 5.2 L7.9 6.3" stroke="#b0b0b0" stroke-width="1.2"/><path d="M1.5 12.5 L5 13.8" stroke="#a0a0a0" stroke-width="1"/></svg>
<div class="t" style="left:66px;top:534px;line-height:18px;color:#7c7c7c;letter-spacing:-0.35px">Fillet019</div>
<svg class="a" style="left:29px;top:557px" width="8" height="10" viewBox="0 0 8 10"><path d="M1.5 1.5 L6 5 L1.5 8.5Z" fill="none" stroke="#8a8a8a" stroke-width="1"/></svg>
<svg class="a" style="left:44px;top:552px" width="16" height="17" viewBox="0 0 16 17"><path d="M0.9 7 Q1.5 3.5 4.1 3.1 L7.5 2.3 L14.7 4.4 Q11 5.5 9.6 7.4 L8.3 9.9 L8.8 11.8 L10.7 10.3 L14.7 11.6 L14.7 14.2 L7.9 15.9 L4.1 14.4 L0.9 12.9Z" fill="#7b7b7b"/><path d="M3.4 5.2 L7.9 6.3" stroke="#b0b0b0" stroke-width="1.2"/><path d="M1.5 12.5 L5 13.8" stroke="#a0a0a0" stroke-width="1"/></svg>
<div class="t" style="left:66px;top:552px;line-height:18px;color:#7c7c7c;letter-spacing:-0.35px">Fillet020</div>
  </div></div>
  <div class="a" style="left:235px;top:0;width:16px;height:425px;background:linear-gradient(90deg,#e8e8e8,#f0f0f0 50%,#e8e8e8)"></div>
  <svg class="a" style="left:239px;top:7px" width="9" height="6" viewBox="0 0 9 6"><path d="M0.5 5L4.5 1L8.5 5Z" fill="#3a3a3a"/></svg>
  <div class="a" style="left:236px;top:19px;width:14px;height:87px;border:1px solid #9a9a9a;border-radius:2px;background:linear-gradient(90deg,#f4f4f4,#e4e4e4 50%,#d8d8d8)"></div>
  <div class="a" style="left:240px;top:59px;width:7px;height:1px;background:#555"></div>
  <div class="a" style="left:240px;top:62px;width:7px;height:1px;background:#555"></div>
  <div class="a" style="left:240px;top:65px;width:7px;height:1px;background:#555"></div>
  <svg class="a" style="left:239px;top:414px" width="9" height="6" viewBox="0 0 9 6"><path d="M0.5 1L4.5 5L8.5 1Z" fill="#3a3a3a"/></svg>
</div>
<!-- property dock -->
<div class="a hdr" style="left:0;top:565px;width:253px;height:19px"></div>
<div class="t" style="left:1px;top:569px;font-size:11px">Affichage des propriétés</div>
<svg class="a" style="left:223px;top:569px" width="10" height="10" viewBox="0 0 10 10"><path d="M3 1.5H8.5V6H7M1.5 4H6.5V8.5H1.5Z" fill="none" stroke="#000" stroke-width="1.3"/><path d="M1.5 4.5H6.5" stroke="#000" stroke-width="1.6"/><path d="M3 2H8.5" stroke="#000" stroke-width="1.6"/></svg>
<svg class="a" style="left:239px;top:569px" width="10" height="10" viewBox="0 0 10 10"><path d="M1.5 1.5L8.5 8.5M8.5 1.5L1.5 8.5" stroke="#000" stroke-width="1.5"/></svg>
<div class="a" style="left:0;top:587px;width:251px;height:411px;border:1px solid #9a9a9a;background:#fff"></div>
<div class="a" style="left:2px;top:589px;width:247px;height:406px;border:1px solid #8a8a8a;background:#fff"></div>
<div class="a" style="left:3px;top:590px;width:245px;height:21px;background:linear-gradient(#fff,#f4f5f7);border-bottom:1px solid #dcdcde"></div>
<div class="a" style="left:102px;top:590px;width:1px;height:20px;background:#e4e4e6"></div>
<div class="t" style="left:7px;top:594px">Propriété</div>
<div class="t" style="left:107px;top:594px">Valeur</div>
<!-- bottom tabs Vue / Donnees -->
<svg class="a" style="left:0;top:995px" width="120" height="18" viewBox="0 0 120 18">
<path d="M109 2.5 L104 13 Q102 16 98 16 L50 16 Q46 16 44 13 L39 2.5" fill="#fff" stroke="#000" stroke-width="1.2"/>
<path d="M0.5 2.5 L40 2.5 L36 12 Q34.5 15 31 15 L7 15 Q4 15 2.5 12 L0.5 7" fill="#f0f0f0" stroke="#000" stroke-width="1.2"/>
<path d="M108 2.5 L120 2.5" stroke="#555" stroke-width="1"/>
</svg>
<div class="t" style="left:11px;top:997px;font-size:11px">Vue</div>
<div class="t" style="left:53px;top:998px;font-size:11px">Données</div>
<div id="view" class="a"></div>

<svg class="a" style="left:1860px;top:900px" width="60" height="70" viewBox="1860 900 60 70">
<path d="M1876.7 944.5 L1876.7 918" stroke="#1a1a90" stroke-width="2"/><path d="M1876.7 913 L1879.2 924 L1874.2 924Z" fill="#1a1a90"/><rect x="1874.5" y="921" width="4.4" height="6" fill="#1a1a90"/>
<path d="M1876.7 944.5 L1894 933.5" stroke="#208020" stroke-width="1.8"/><path d="M1895.5 932.5 L1886 936 L1889 940Z" fill="#208020"/>
<path d="M1876.7 944.5 L1901.5 959" stroke="#901818" stroke-width="1.8"/><path d="M1902 959.5 L1890 954 L1893 950Z" fill="#901818"/><ellipse cx="1894" cy="954.5" rx="3" ry="2.3" fill="#901818" transform="rotate(30 1894 954.5)"/>
<text x="1881" y="916" font-family="Liberation Sans" font-size="9" fill="#000">Z</text>
<text x="1897" y="936" font-family="Liberation Sans" font-size="9" fill="#000">Y</text>
<text x="1905" y="961" font-family="Liberation Sans" font-size="9" fill="#000">X</text>
</svg>
<svg class="a" style="left:0;top:0" width="1920" height="1034" viewBox="0 0 1920 1034"><defs><linearGradient id="cyl" x1="0" x2="1"><stop offset="0" stop-color="#a8a8a8"/><stop offset="0.2" stop-color="#cacaca"/><stop offset="0.6" stop-color="#c0c0c0"/><stop offset="1" stop-color="#9c9c9c"/></linearGradient></defs><polygon points="654.0,577.4 682.8,561.2 1077.7,333.5 1106.0,316.9 1116.2,321.9 1116.2,352.4 1136.5,335.0 1147.4,341.5 1160.8,364.0 1160.8,389.4 1091.5,429.3 813.9,589.5 1117.9,765.0 1120.2,770.5 1135.7,779.7 1135.7,820.7 1102.4,839.3 1075.3,816.1 1049.8,830.0 653.8,601.4" fill="#8e8e8e"/><polygon points="792.8,577.2 1091.5,404.7 1091.5,429.3 813.9,589.5" fill="#9a9a9a"/><polygon points="1091.5,404.7 1160.8,364.0 1160.8,389.4 1091.5,429.3" fill="#9b9b9b"/><polygon points="780.6,553.5 1147.4,341.5 1160.8,364.0 792.8,577.2 780.6,570.0 785.5,562.0" fill="#b7b7b7"/><polygon points="1077.7,333.5 1106.0,316.9 1116.2,321.9 1077.7,337.9" fill="#979797"/><polygon points="1077.7,337.9 1116.2,321.9 1116.2,352.4 1109.7,358.2" fill="#a3a3a3"/><polygon points="654.0,577.4 1049.8,805.3 1049.8,830.0 653.8,601.4" fill="#9a9a9a"/><polygon points="654.0,577.4 682.8,561.2 1062.9,783.6 1049.8,805.3" fill="#b7b7b7"/><polygon points="682.8,561.2 739.0,528.0 780.6,553.5 785.5,562.0 780.6,570.0 739.1,592.9" fill="#8e8e8e"/><polygon points="1062.9,783.6 1075.3,775.9 1075.3,816.1 1049.8,830.0 1049.8,805.3" fill="#a0a0a0"/><polygon points="1075.3,775.9 1120.2,770.5 1135.7,779.7 1102.4,799.1" fill="#8f8f8f"/><polygon points="1075.3,775.9 1102.4,799.1 1102.4,839.3 1075.3,816.1" fill="#7c7c7c"/><polygon points="1102.4,799.1 1135.7,779.7 1135.7,820.7 1102.4,839.3" fill="#9b9b9b"/><polygon points="654.0,577.4 682.8,561.2 1077.7,333.5 1106.0,316.9 1116.2,321.9 1116.2,352.4 1136.5,335.0 1147.4,341.5 1160.8,364.0 1160.8,389.4 1091.5,429.3 813.9,589.5 1117.9,765.0 1120.2,770.5 1135.7,779.7 1135.7,820.7 1102.4,839.3 1075.3,816.1 1049.8,830.0 653.8,601.4" fill="none" stroke="#000" stroke-width="1.6" stroke-linejoin="round"/><polyline points="654.0,577.4 682.8,561.2" fill="none" stroke="#000" stroke-width="1.6" stroke-linejoin="round"/><polyline points="682.8,561.2 1062.9,783.6 1075.3,775.9" fill="none" stroke="#000" stroke-width="1.6" stroke-linejoin="round"/><polyline points="654.0,577.4 1049.8,805.3" fill="none" stroke="#000" stroke-width="1.6" stroke-linejoin="round"/><polyline points="739.1,592.9 724.4,616.1 724.4,641.6" fill="none" stroke="#000" stroke-width="1.6" stroke-linejoin="round"/><polyline points="994.8,741.8 980.9,765.0 980.9,789.0" fill="none" stroke="#000" stroke-width="1.6" stroke-linejoin="round"/><polyline points="1062.9,783.6 1049.8,805.3 1049.8,830.0" fill="none" stroke="#000" stroke-width="1.6" stroke-linejoin="round"/><polyline points="1075.3,775.9 1075.3,816.1" fill="none" stroke="#000" stroke-width="1.6" stroke-linejoin="round"/><polyline points="1075.3,775.9 1102.4,799.1 1135.7,779.7" fill="none" stroke="#000" stroke-width="1.6" stroke-linejoin="round"/><polyline points="1102.4,799.1 1102.4,839.3" fill="none" stroke="#000" stroke-width="1.6" stroke-linejoin="round"/><polyline points="994.8,741.8 1028.1,721.7" fill="none" stroke="#000" stroke-width="1.6" stroke-linejoin="round"/><polyline points="780.6,553.5 1147.4,341.5" fill="none" stroke="#000" stroke-width="1.6" stroke-linejoin="round"/><polyline points="792.8,577.2 1160.8,364.0" fill="none" stroke="#000" stroke-width="1.6" stroke-linejoin="round"/><polyline points="1078.5,380.7 1091.5,404.7 1091.5,429.3" fill="none" stroke="#000" stroke-width="1.6" stroke-linejoin="round"/><polyline points="1078.5,380.7 1042.9,359.7" fill="none" stroke="#000" stroke-width="1.6" stroke-linejoin="round"/><polyline points="1077.7,337.9 1116.2,321.9" fill="none" stroke="#000" stroke-width="1.6" stroke-linejoin="round"/><polyline points="1077.7,337.9 1109.7,358.2" fill="none" stroke="#000" stroke-width="1.6" stroke-linejoin="round"/><polyline points="1077.7,333.5 1077.7,337.9" fill="none" stroke="#000" stroke-width="1.6" stroke-linejoin="round"/><polyline points="739.0,528.0 780.6,553.5" fill="none" stroke="#000" stroke-width="1.6" stroke-linejoin="round"/><path d="M780.6 553.5 Q788 562 780.6 570.0" fill="none" stroke="#000" stroke-width="1.6"/><polyline points="780.6,570.0 813.9,589.5 1117.9,765.0" fill="none" stroke="#000" stroke-width="1.6" stroke-linejoin="round"/><polyline points="780.6,570.0 739.1,592.9" fill="none" stroke="#000" stroke-width="1.6" stroke-linejoin="round"/><rect x="751.8" y="494.5" width="13.8" height="51.6" rx="2.5" fill="url(#cyl)"/><line x1="752.2" y1="494.5" x2="752.2" y2="544.1" stroke="#222" stroke-width="0.9"/><line x1="765.3" y1="495.5" x2="765.3" y2="543.1" stroke="#666" stroke-width="0.7"/><polygon points="750.9,488.0 766.5,488.0 765.7,497.0 751.7,497.0" fill="#ababab"/><path d="M751.7 495.7 Q758.7 499.5 765.7 495.7" fill="none" stroke="#111" stroke-width="1.5"/><ellipse cx="758.7" cy="482.9" rx="9.6" ry="6.2" fill="#e4e4e4" stroke="#111" stroke-width="1.2"/><ellipse cx="758.7" cy="481.2" rx="8.2" ry="4.2" fill="#3a3a3a" stroke="#111" stroke-width="1.9"/><path d="M756.5 482.1 q-1 -2.2 2 -2.2 q3 0 2.4 2.2 q-1 1.2 -3 0.6" fill="none" stroke="#c8c8c8" stroke-width="1.2"/><path d="M749.9 485.7 Q758.7 490.7 767.5 485.7" fill="none" stroke="#111" stroke-width="1.3"/><rect x="786.5" y="474.4" width="13.8" height="51.6" rx="2.5" fill="url(#cyl)"/><line x1="786.9" y1="474.4" x2="786.9" y2="524.0" stroke="#222" stroke-width="0.9"/><line x1="800.0" y1="475.4" x2="800.0" y2="523.0" stroke="#666" stroke-width="0.7"/><polygon points="785.6,467.9 801.2,467.9 800.4,476.9 786.4,476.9" fill="#ababab"/><path d="M786.4 475.6 Q793.4 479.4 800.4 475.6" fill="none" stroke="#111" stroke-width="1.5"/><ellipse cx="793.4" cy="462.8" rx="9.6" ry="6.2" fill="#e4e4e4" stroke="#111" stroke-width="1.2"/><ellipse cx="793.4" cy="461.1" rx="8.2" ry="4.2" fill="#3a3a3a" stroke="#111" stroke-width="1.9"/><path d="M791.2 462.0 q-1 -2.2 2 -2.2 q3 0 2.4 2.2 q-1 1.2 -3 0.6" fill="none" stroke="#c8c8c8" stroke-width="1.2"/><path d="M784.6 465.6 Q793.4 470.6 802.2 465.6" fill="none" stroke="#111" stroke-width="1.3"/><rect x="821.2" y="454.3" width="13.8" height="51.6" rx="2.5" fill="url(#cyl)"/><line x1="821.6" y1="454.3" x2="821.6" y2="503.9" stroke="#222" stroke-width="0.9"/><line x1="834.7" y1="455.3" x2="834.7" y2="502.9" stroke="#666" stroke-width="0.7"/><polygon points="820.3,447.8 835.9,447.8 835.1,456.8 821.1,456.8" fill="#ababab"/><path d="M821.1 455.5 Q828.1 459.3 835.1 455.5" fill="none" stroke="#111" stroke-width="1.5"/><ellipse cx="828.1" cy="442.7" rx="9.6" ry="6.2" fill="#e4e4e4" stroke="#111" stroke-width="1.2"/><ellipse cx="828.1" cy="441.0" rx="8.2" ry="4.2" fill="#3a3a3a" stroke="#111" stroke-width="1.9"/><path d="M825.9 441.9 q-1 -2.2 2 -2.2 q3 0 2.4 2.2 q-1 1.2 -3 0.6" fill="none" stroke="#c8c8c8" stroke-width="1.2"/><path d="M819.3 445.5 Q828.1 450.5 836.9 445.5" fill="none" stroke="#111" stroke-width="1.3"/><rect x="855.9" y="434.3" width="13.8" height="51.6" rx="2.5" fill="url(#cyl)"/><line x1="856.3" y1="434.3" x2="856.3" y2="483.9" stroke="#222" stroke-width="0.9"/><line x1="869.4" y1="435.3" x2="869.4" y2="482.9" stroke="#666" stroke-width="0.7"/><polygon points="855.0,427.8 870.6,427.8 869.8,436.8 855.8,436.8" fill="#ababab"/><path d="M855.8 435.5 Q862.8 439.3 869.8 435.5" fill="none" stroke="#111" stroke-width="1.5"/><ellipse cx="862.8" cy="422.7" rx="9.6" ry="6.2" fill="#e4e4e4" stroke="#111" stroke-width="1.2"/><ellipse cx="862.8" cy="421.0" rx="8.2" ry="4.2" fill="#3a3a3a" stroke="#111" stroke-width="1.9"/><path d="M860.6 421.9 q-1 -2.2 2 -2.2 q3 0 2.4 2.2 q-1 1.2 -3 0.6" fill="none" stroke="#c8c8c8" stroke-width="1.2"/><path d="M854.0 425.5 Q862.8 430.5 871.6 425.5" fill="none" stroke="#111" stroke-width="1.3"/><rect x="890.6" y="414.2" width="13.8" height="51.6" rx="2.5" fill="url(#cyl)"/><line x1="891.0" y1="414.2" x2="891.0" y2="463.8" stroke="#222" stroke-width="0.9"/><line x1="904.1" y1="415.2" x2="904.1" y2="462.8" stroke="#666" stroke-width="0.7"/><polygon points="889.7,407.7 905.3,407.7 904.5,416.7 890.5,416.7" fill="#ababab"/><path d="M890.5 415.4 Q897.5 419.2 904.5 415.4" fill="none" stroke="#111" stroke-width="1.5"/><ellipse cx="897.5" cy="402.6" rx="9.6" ry="6.2" fill="#e4e4e4" stroke="#111" stroke-width="1.2"/><ellipse cx="897.5" cy="400.9" rx="8.2" ry="4.2" fill="#3a3a3a" stroke="#111" stroke-width="1.9"/><path d="M895.3 401.8 q-1 -2.2 2 -2.2 q3 0 2.4 2.2 q-1 1.2 -3 0.6" fill="none" stroke="#c8c8c8" stroke-width="1.2"/><path d="M888.7 405.4 Q897.5 410.4 906.3 405.4" fill="none" stroke="#111" stroke-width="1.3"/><rect x="925.3" y="394.1" width="13.8" height="51.6" rx="2.5" fill="url(#cyl)"/><line x1="925.7" y1="394.1" x2="925.7" y2="443.7" stroke="#222" stroke-width="0.9"/><line x1="938.8" y1="395.1" x2="938.8" y2="442.7" stroke="#666" stroke-width="0.7"/><polygon points="924.4,387.6 940.0,387.6 939.2,396.6 925.2,396.6" fill="#ababab"/><path d="M925.2 395.3 Q932.2 399.1 939.2 395.3" fill="none" stroke="#111" stroke-width="1.5"/><ellipse cx="932.2" cy="382.5" rx="9.6" ry="6.2" fill="#e4e4e4" stroke="#111" stroke-width="1.2"/><ellipse cx="932.2" cy="380.8" rx="8.2" ry="4.2" fill="#3a3a3a" stroke="#111" stroke-width="1.9"/><path d="M930.0 381.7 q-1 -2.2 2 -2.2 q3 0 2.4 2.2 q-1 1.2 -3 0.6" fill="none" stroke="#c8c8c8" stroke-width="1.2"/><path d="M923.4 385.3 Q932.2 390.3 941.0 385.3" fill="none" stroke="#111" stroke-width="1.3"/><rect x="960.0" y="374.0" width="13.8" height="51.6" rx="2.5" fill="url(#cyl)"/><line x1="960.4" y1="374.0" x2="960.4" y2="423.6" stroke="#222" stroke-width="0.9"/><line x1="973.5" y1="375.0" x2="973.5" y2="422.6" stroke="#666" stroke-width="0.7"/><polygon points="959.1,367.5 974.7,367.5 973.9,376.5 959.9,376.5" fill="#ababab"/><path d="M959.9 375.2 Q966.9 379.0 973.9 375.2" fill="none" stroke="#111" stroke-width="1.5"/><ellipse cx="966.9" cy="362.4" rx="9.6" ry="6.2" fill="#e4e4e4" stroke="#111" stroke-width="1.2"/><ellipse cx="966.9" cy="360.7" rx="8.2" ry="4.2" fill="#3a3a3a" stroke="#111" stroke-width="1.9"/><path d="M964.7 361.6 q-1 -2.2 2 -2.2 q3 0 2.4 2.2 q-1 1.2 -3 0.6" fill="none" stroke="#c8c8c8" stroke-width="1.2"/><path d="M958.1 365.2 Q966.9 370.2 975.7 365.2" fill="none" stroke="#111" stroke-width="1.3"/><rect x="994.7" y="353.9" width="13.8" height="51.6" rx="2.5" fill="url(#cyl)"/><line x1="995.1" y1="353.9" x2="995.1" y2="403.5" stroke="#222" stroke-width="0.9"/><line x1="1008.2" y1="354.9" x2="1008.2" y2="402.5" stroke="#666" stroke-width="0.7"/><polygon points="993.8,347.4 1009.4,347.4 1008.6,356.4 994.6,356.4" fill="#ababab"/><path d="M994.6 355.1 Q1001.6 358.9 1008.6 355.1" fill="none" stroke="#111" stroke-width="1.5"/><ellipse cx="1001.6" cy="342.3" rx="9.6" ry="6.2" fill="#e4e4e4" stroke="#111" stroke-width="1.2"/><ellipse cx="1001.6" cy="340.6" rx="8.2" ry="4.2" fill="#3a3a3a" stroke="#111" stroke-width="1.9"/><path d="M999.4 341.5 q-1 -2.2 2 -2.2 q3 0 2.4 2.2 q-1 1.2 -3 0.6" fill="none" stroke="#c8c8c8" stroke-width="1.2"/><path d="M992.8 345.1 Q1001.6 350.1 1010.4 345.1" fill="none" stroke="#111" stroke-width="1.3"/><rect x="1029.4" y="333.9" width="13.8" height="51.6" rx="2.5" fill="url(#cyl)"/><line x1="1029.8" y1="333.9" x2="1029.8" y2="383.5" stroke="#222" stroke-width="0.9"/><line x1="1042.9" y1="334.9" x2="1042.9" y2="382.5" stroke="#666" stroke-width="0.7"/><polygon points="1028.5,327.4 1044.1,327.4 1043.3,336.4 1029.3,336.4" fill="#ababab"/><path d="M1029.3 335.1 Q1036.3 338.9 1043.3 335.1" fill="none" stroke="#111" stroke-width="1.5"/><ellipse cx="1036.3" cy="322.3" rx="9.6" ry="6.2" fill="#e4e4e4" stroke="#111" stroke-width="1.2"/><ellipse cx="1036.3" cy="320.6" rx="8.2" ry="4.2" fill="#3a3a3a" stroke="#111" stroke-width="1.9"/><path d="M1034.1 321.5 q-1 -2.2 2 -2.2 q3 0 2.4 2.2 q-1 1.2 -3 0.6" fill="none" stroke="#c8c8c8" stroke-width="1.2"/><path d="M1027.5 325.1 Q1036.3 330.1 1045.1 325.1" fill="none" stroke="#111" stroke-width="1.3"/><rect x="1064.1" y="313.8" width="13.8" height="51.6" rx="2.5" fill="url(#cyl)"/><line x1="1064.5" y1="313.8" x2="1064.5" y2="363.4" stroke="#222" stroke-width="0.9"/><line x1="1077.6" y1="314.8" x2="1077.6" y2="362.4" stroke="#666" stroke-width="0.7"/><polygon points="1063.2,307.3 1078.8,307.3 1078.0,316.3 1064.0,316.3" fill="#ababab"/><path d="M1064.0 315.0 Q1071.0 318.8 1078.0 315.0" fill="none" stroke="#111" stroke-width="1.5"/><ellipse cx="1071.0" cy="302.2" rx="9.6" ry="6.2" fill="#e4e4e4" stroke="#111" stroke-width="1.2"/><ellipse cx="1071.0" cy="300.5" rx="8.2" ry="4.2" fill="#3a3a3a" stroke="#111" stroke-width="1.9"/><path d="M1068.8 301.4 q-1 -2.2 2 -2.2 q3 0 2.4 2.2 q-1 1.2 -3 0.6" fill="none" stroke="#c8c8c8" stroke-width="1.2"/><path d="M1062.2 305.0 Q1071.0 310.0 1079.8 305.0" fill="none" stroke="#111" stroke-width="1.3"/><rect x="752.5" y="535.7" width="13.8" height="50.3" rx="2.5" fill="url(#cyl)"/><rect x="752.3" y="525.7" width="4.8" height="59.3" fill="#151515"/><line x1="766.0" y1="536.7" x2="766.0" y2="583.0" stroke="#666" stroke-width="0.7"/><polygon points="751.6,529.2 767.2,529.2 766.4,538.2 752.4,538.2" fill="#ababab"/><path d="M752.4 536.9 Q759.4 540.7 766.4 536.9" fill="none" stroke="#111" stroke-width="1.5"/><rect x="752.3" y="525.7" width="4.8" height="12" fill="#151515"/><ellipse cx="759.4" cy="524.1" rx="9.6" ry="6.2" fill="#e4e4e4" stroke="#111" stroke-width="1.2"/><ellipse cx="759.4" cy="522.4" rx="8.2" ry="4.2" fill="#3a3a3a" stroke="#111" stroke-width="1.9"/><path d="M757.2 523.3 q-1 -2.2 2 -2.2 q3 0 2.4 2.2 q-1 1.2 -3 0.6" fill="none" stroke="#c8c8c8" stroke-width="1.2"/><path d="M750.6 526.9 Q759.4 531.9 768.2 526.9" fill="none" stroke="#111" stroke-width="1.3"/><path d="M753.9 524.2 l1 9" stroke="#eee" stroke-width="1.3"/><rect x="787.1" y="555.6" width="13.8" height="50.3" rx="2.5" fill="url(#cyl)"/><rect x="786.9" y="545.6" width="4.8" height="59.3" fill="#151515"/><line x1="800.6" y1="556.6" x2="800.6" y2="602.9" stroke="#666" stroke-width="0.7"/><polygon points="786.2,549.1 801.8,549.1 801.0,558.1 787.0,558.1" fill="#ababab"/><path d="M787.0 556.8 Q794.0 560.6 801.0 556.8" fill="none" stroke="#111" stroke-width="1.5"/><rect x="786.9" y="545.6" width="4.8" height="12" fill="#151515"/><ellipse cx="794.0" cy="544.0" rx="9.6" ry="6.2" fill="#e4e4e4" stroke="#111" stroke-width="1.2"/><ellipse cx="794.0" cy="542.3" rx="8.2" ry="4.2" fill="#3a3a3a" stroke="#111" stroke-width="1.9"/><path d="M791.8 543.2 q-1 -2.2 2 -2.2 q3 0 2.4 2.2 q-1 1.2 -3 0.6" fill="none" stroke="#c8c8c8" stroke-width="1.2"/><path d="M785.2 546.8 Q794.0 551.8 802.8 546.8" fill="none" stroke="#111" stroke-width="1.3"/><path d="M788.5 544.1 l1 9" stroke="#eee" stroke-width="1.3"/><rect x="821.8" y="575.6" width="13.8" height="50.3" rx="2.5" fill="url(#cyl)"/><rect x="821.6" y="565.6" width="4.8" height="59.3" fill="#151515"/><line x1="835.3" y1="576.6" x2="835.3" y2="622.9" stroke="#666" stroke-width="0.7"/><polygon points="820.9,569.1 836.5,569.1 835.7,578.1 821.7,578.1" fill="#ababab"/><path d="M821.7 576.8 Q828.7 580.6 835.7 576.8" fill="none" stroke="#111" stroke-width="1.5"/><rect x="821.6" y="565.6" width="4.8" height="12" fill="#151515"/><ellipse cx="828.7" cy="564.0" rx="9.6" ry="6.2" fill="#e4e4e4" stroke="#111" stroke-width="1.2"/><ellipse cx="828.7" cy="562.3" rx="8.2" ry="4.2" fill="#3a3a3a" stroke="#111" stroke-width="1.9"/><path d="M826.5 563.2 q-1 -2.2 2 -2.2 q3 0 2.4 2.2 q-1 1.2 -3 0.6" fill="none" stroke="#c8c8c8" stroke-width="1.2"/><path d="M819.9 566.8 Q828.7 571.8 837.5 566.8" fill="none" stroke="#111" stroke-width="1.3"/><path d="M823.2 564.1 l1 9" stroke="#eee" stroke-width="1.3"/><rect x="856.4" y="595.5" width="13.8" height="50.3" rx="2.5" fill="url(#cyl)"/><rect x="856.2" y="585.5" width="4.8" height="59.3" fill="#151515"/><line x1="869.9" y1="596.5" x2="869.9" y2="642.8" stroke="#666" stroke-width="0.7"/><polygon points="855.5,589.0 871.1,589.0 870.3,598.0 856.3,598.0" fill="#ababab"/><path d="M856.3 596.7 Q863.3 600.5 870.3 596.7" fill="none" stroke="#111" stroke-width="1.5"/><rect x="856.2" y="585.5" width="4.8" height="12" fill="#151515"/><ellipse cx="863.3" cy="583.9" rx="9.6" ry="6.2" fill="#e4e4e4" stroke="#111" stroke-width="1.2"/><ellipse cx="863.3" cy="582.2" rx="8.2" ry="4.2" fill="#3a3a3a" stroke="#111" stroke-width="1.9"/><path d="M861.1 583.1 q-1 -2.2 2 -2.2 q3 0 2.4 2.2 q-1 1.2 -3 0.6" fill="none" stroke="#c8c8c8" stroke-width="1.2"/><path d="M854.5 586.7 Q863.3 591.7 872.1 586.7" fill="none" stroke="#111" stroke-width="1.3"/><path d="M857.8 584.0 l1 9" stroke="#eee" stroke-width="1.3"/><rect x="891.1" y="615.4" width="13.8" height="50.3" rx="2.5" fill="url(#cyl)"/><rect x="890.9" y="605.4" width="4.8" height="59.3" fill="#151515"/><line x1="904.6" y1="616.4" x2="904.6" y2="662.7" stroke="#666" stroke-width="0.7"/><polygon points="890.2,608.9 905.8,608.9 905.0,617.9 891.0,617.9" fill="#ababab"/><path d="M891.0 616.6 Q898.0 620.4 905.0 616.6" fill="none" stroke="#111" stroke-width="1.5"/><rect x="890.9" y="605.4" width="4.8" height="12" fill="#151515"/><ellipse cx="898.0" cy="603.8" rx="9.6" ry="6.2" fill="#e4e4e4" stroke="#111" stroke-width="1.2"/><ellipse cx="898.0" cy="602.1" rx="8.2" ry="4.2" fill="#3a3a3a" stroke="#111" stroke-width="1.9"/><path d="M895.8 603.0 q-1 -2.2 2 -2.2 q3 0 2.4 2.2 q-1 1.2 -3 0.6" fill="none" stroke="#c8c8c8" stroke-width="1.2"/><path d="M889.2 606.6 Q898.0 611.6 906.8 606.6" fill="none" stroke="#111" stroke-width="1.3"/><path d="M892.5 603.9 l1 9" stroke="#eee" stroke-width="1.3"/><rect x="925.8" y="635.4" width="13.8" height="50.3" rx="2.5" fill="url(#cyl)"/><rect x="925.5" y="625.4" width="4.8" height="59.3" fill="#151515"/><line x1="939.2" y1="636.4" x2="939.2" y2="682.6" stroke="#666" stroke-width="0.7"/><polygon points="924.9,628.9 940.4,628.9 939.6,637.9 925.6,637.9" fill="#ababab"/><path d="M925.6 636.6 Q932.6 640.4 939.6 636.6" fill="none" stroke="#111" stroke-width="1.5"/><rect x="925.5" y="625.4" width="4.8" height="12" fill="#151515"/><ellipse cx="932.6" cy="623.8" rx="9.6" ry="6.2" fill="#e4e4e4" stroke="#111" stroke-width="1.2"/><ellipse cx="932.6" cy="622.1" rx="8.2" ry="4.2" fill="#3a3a3a" stroke="#111" stroke-width="1.9"/><path d="M930.4 623.0 q-1 -2.2 2 -2.2 q3 0 2.4 2.2 q-1 1.2 -3 0.6" fill="none" stroke="#c8c8c8" stroke-width="1.2"/><path d="M923.9 626.6 Q932.6 631.6 941.4 626.6" fill="none" stroke="#111" stroke-width="1.3"/><path d="M927.1 623.9 l1 9" stroke="#eee" stroke-width="1.3"/><rect x="960.4" y="655.3" width="13.8" height="50.3" rx="2.5" fill="url(#cyl)"/><rect x="960.2" y="645.3" width="4.8" height="59.3" fill="#151515"/><line x1="973.9" y1="656.3" x2="973.9" y2="702.6" stroke="#666" stroke-width="0.7"/><polygon points="959.5,648.8 975.1,648.8 974.3,657.8 960.3,657.8" fill="#ababab"/><path d="M960.3 656.5 Q967.3 660.3 974.3 656.5" fill="none" stroke="#111" stroke-width="1.5"/><rect x="960.2" y="645.3" width="4.8" height="12" fill="#151515"/><ellipse cx="967.3" cy="643.7" rx="9.6" ry="6.2" fill="#e4e4e4" stroke="#111" stroke-width="1.2"/><ellipse cx="967.3" cy="642.0" rx="8.2" ry="4.2" fill="#3a3a3a" stroke="#111" stroke-width="1.9"/><path d="M965.1 642.9 q-1 -2.2 2 -2.2 q3 0 2.4 2.2 q-1 1.2 -3 0.6" fill="none" stroke="#c8c8c8" stroke-width="1.2"/><path d="M958.5 646.5 Q967.3 651.5 976.1 646.5" fill="none" stroke="#111" stroke-width="1.3"/><path d="M961.8 643.8 l1 9" stroke="#eee" stroke-width="1.3"/><rect x="995.0" y="675.2" width="13.8" height="50.3" rx="2.5" fill="url(#cyl)"/><rect x="994.8" y="665.2" width="4.8" height="59.3" fill="#151515"/><line x1="1008.5" y1="676.2" x2="1008.5" y2="722.5" stroke="#666" stroke-width="0.7"/><polygon points="994.1,668.7 1009.7,668.7 1008.9,677.7 994.9,677.7" fill="#ababab"/><path d="M994.9 676.4 Q1001.9 680.2 1008.9 676.4" fill="none" stroke="#111" stroke-width="1.5"/><rect x="994.8" y="665.2" width="4.8" height="12" fill="#151515"/><ellipse cx="1001.9" cy="663.6" rx="9.6" ry="6.2" fill="#e4e4e4" stroke="#111" stroke-width="1.2"/><ellipse cx="1001.9" cy="661.9" rx="8.2" ry="4.2" fill="#3a3a3a" stroke="#111" stroke-width="1.9"/><path d="M999.7 662.8 q-1 -2.2 2 -2.2 q3 0 2.4 2.2 q-1 1.2 -3 0.6" fill="none" stroke="#c8c8c8" stroke-width="1.2"/><path d="M993.1 666.4 Q1001.9 671.4 1010.7 666.4" fill="none" stroke="#111" stroke-width="1.3"/><path d="M996.4 663.7 l1 9" stroke="#eee" stroke-width="1.3"/><rect x="1029.7" y="695.1" width="13.8" height="50.3" rx="2.5" fill="url(#cyl)"/><rect x="1029.5" y="685.1" width="4.8" height="59.3" fill="#151515"/><line x1="1043.2" y1="696.1" x2="1043.2" y2="742.4" stroke="#666" stroke-width="0.7"/><polygon points="1028.8,688.6 1044.4,688.6 1043.6,697.6 1029.6,697.6" fill="#ababab"/><path d="M1029.6 696.3 Q1036.6 700.1 1043.6 696.3" fill="none" stroke="#111" stroke-width="1.5"/><rect x="1029.5" y="685.1" width="4.8" height="12" fill="#151515"/><ellipse cx="1036.6" cy="683.5" rx="9.6" ry="6.2" fill="#e4e4e4" stroke="#111" stroke-width="1.2"/><ellipse cx="1036.6" cy="681.8" rx="8.2" ry="4.2" fill="#3a3a3a" stroke="#111" stroke-width="1.9"/><path d="M1034.4 682.7 q-1 -2.2 2 -2.2 q3 0 2.4 2.2 q-1 1.2 -3 0.6" fill="none" stroke="#c8c8c8" stroke-width="1.2"/><path d="M1027.8 686.3 Q1036.6 691.3 1045.4 686.3" fill="none" stroke="#111" stroke-width="1.3"/><path d="M1031.1 683.6 l1 9" stroke="#eee" stroke-width="1.3"/><rect x="1064.3" y="715.1" width="13.8" height="50.3" rx="2.5" fill="url(#cyl)"/><rect x="1064.1" y="705.1" width="4.8" height="59.3" fill="#151515"/><line x1="1077.8" y1="716.1" x2="1077.8" y2="762.4" stroke="#666" stroke-width="0.7"/><polygon points="1063.5,708.6 1079.0,708.6 1078.2,717.6 1064.2,717.6" fill="#ababab"/><path d="M1064.2 716.3 Q1071.2 720.1 1078.2 716.3" fill="none" stroke="#111" stroke-width="1.5"/><rect x="1064.1" y="705.1" width="4.8" height="12" fill="#151515"/><ellipse cx="1071.2" cy="703.5" rx="9.6" ry="6.2" fill="#e4e4e4" stroke="#111" stroke-width="1.2"/><ellipse cx="1071.2" cy="701.8" rx="8.2" ry="4.2" fill="#3a3a3a" stroke="#111" stroke-width="1.9"/><path d="M1069.0 702.7 q-1 -2.2 2 -2.2 q3 0 2.4 2.2 q-1 1.2 -3 0.6" fill="none" stroke="#c8c8c8" stroke-width="1.2"/><path d="M1062.5 706.3 Q1071.2 711.3 1080.0 706.3" fill="none" stroke="#111" stroke-width="1.3"/><path d="M1065.8 703.6 l1 9" stroke="#eee" stroke-width="1.3"/><rect x="1099.0" y="735.0" width="13.8" height="50.3" rx="2.5" fill="url(#cyl)"/><rect x="1098.8" y="725.0" width="4.8" height="59.3" fill="#151515"/><line x1="1112.5" y1="736.0" x2="1112.5" y2="782.3" stroke="#666" stroke-width="0.7"/><polygon points="1098.1,728.5 1113.7,728.5 1112.9,737.5 1098.9,737.5" fill="#ababab"/><path d="M1098.9 736.2 Q1105.9 740.0 1112.9 736.2" fill="none" stroke="#111" stroke-width="1.5"/><rect x="1098.8" y="725.0" width="4.8" height="12" fill="#151515"/><ellipse cx="1105.9" cy="723.4" rx="9.6" ry="6.2" fill="#e4e4e4" stroke="#111" stroke-width="1.2"/><ellipse cx="1105.9" cy="721.7" rx="8.2" ry="4.2" fill="#3a3a3a" stroke="#111" stroke-width="1.9"/><path d="M1103.7 722.6 q-1 -2.2 2 -2.2 q3 0 2.4 2.2 q-1 1.2 -3 0.6" fill="none" stroke="#c8c8c8" stroke-width="1.2"/><path d="M1097.1 726.2 Q1105.9 731.2 1114.7 726.2" fill="none" stroke="#111" stroke-width="1.3"/><path d="M1100.4 723.5 l1 9" stroke="#eee" stroke-width="1.3"/></svg>
<!-- mdi tabs -->
<div class="a" style="left:259px;top:989px;width:172px;height:21px;border:1px solid #898c95;border-top:none;background:linear-gradient(#d9d9d9,#e6e6e6 40%,#ececec)"></div>
<svg class="a" style="left:270px;top:991px" width="15" height="14" viewBox="0 0 15 14"><rect x="0" y="0" width="4" height="12" fill="#e0201a"/><rect x="0" y="0" width="8" height="4" fill="#e0201a"/><circle cx="9" cy="8.5" r="4.2" fill="#1d3cb8"/><g stroke="#1d3cb8" stroke-width="1.8"><path d="M9 2.8V14.2M3.3 8.5H14.7M5 4.5L13 12.5M13 4.5L5 12.5"/></g><circle cx="9" cy="8.5" r="1.6" fill="#7fb0ff"/></svg>
<div class="t" style="left:288px;top:993px;font-size:11px">pin-loom-21pegs-v2 : 1</div>
<div class="a" style="left:404px;top:992px;width:14px;height:14px;border-radius:2px;background:#c9c9c9;border:1px solid #b0b0b0"></div>
<svg class="a" style="left:404px;top:992px" width="14" height="14" viewBox="0 0 14 14"><path d="M4 4L10 10M10 4L4 10" stroke="#fff" stroke-width="2.2"/></svg>
<div class="a" style="left:430px;top:988px;width:178px;height:24px;border:1px solid #898c95;border-top:none;background:#fff"></div>
<svg class="a" style="left:445px;top:992px" width="15" height="14" viewBox="0 0 15 14"><rect x="0" y="0" width="4" height="12" fill="#e0201a"/><rect x="0" y="0" width="8" height="4" fill="#e0201a"/><circle cx="9" cy="8.5" r="4.2" fill="#1d3cb8"/><g stroke="#1d3cb8" stroke-width="1.8"><path d="M9 2.8V14.2M3.3 8.5H14.7M5 4.5L13 12.5M13 4.5L5 12.5"/></g><circle cx="9" cy="8.5" r="1.6" fill="#7fb0ff"/></svg>
<div class="t" style="left:463px;top:994px;font-size:11px">pin-loom-21pegs-v1 : 1</div>
<div class="a" style="left:579px;top:993px;width:14px;height:14px;border-radius:2px;background:#e07a5a;border:1px solid #c86448"></div>
<svg class="a" style="left:579px;top:993px" width="14" height="14" viewBox="0 0 14 14"><path d="M4 4L10 10M10 4L4 10" stroke="#fff" stroke-width="2.2"/></svg>
<!-- status bar -->
<div class="a" style="left:124px;top:1014px;width:1px;height:20px;background:#d6d6d6"></div>
<div class="t" style="left:1799px;top:1019px;font-size:11px">338.56 x 178.54 mm</div>

</body></html>
